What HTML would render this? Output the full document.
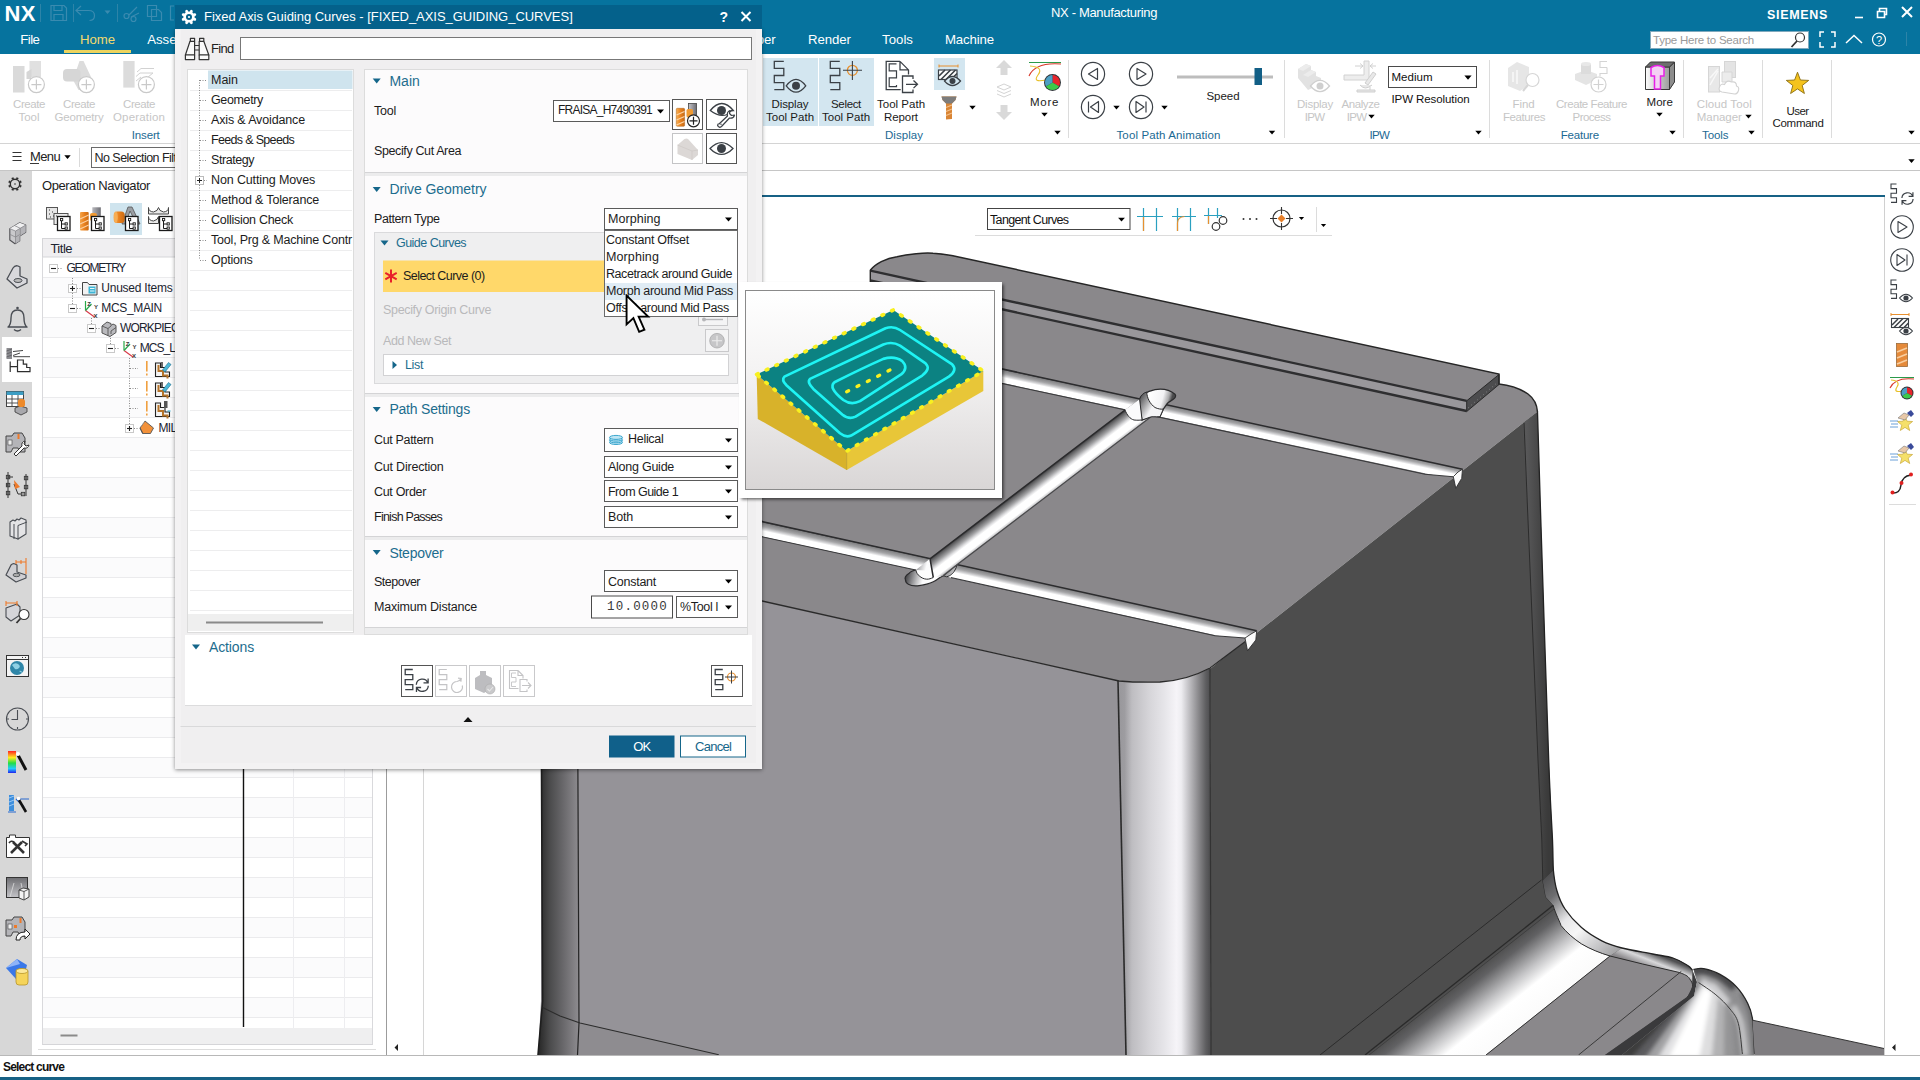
<!DOCTYPE html>
<html><head><meta charset="utf-8"><title>NX</title><style>html,body{margin:0;padding:0;background:#fff;}
body{width:1920px;height:1080px;position:relative;overflow:hidden;font-family:"Liberation Sans",sans-serif;}
.b{position:absolute;display:block;box-sizing:content-box;}
.t{position:absolute;white-space:nowrap;line-height:1.12;font-family:"Liberation Sans",sans-serif;}
svg{overflow:hidden;}
</style></head><body>
<div class="b" style="left:0px;top:0px;width:1920px;height:54px;background:#06739e;"></div>
<div class="t " style="left:4.5px;top:2.0px;font-size:22px;color:#fff;letter-spacing:0.47px;font-weight:bold;">NX</div>
<div class="b" style="left:40px;top:4px;width:1px;height:18px;background:#2d84a8;"></div>
<svg class="b" style="left:0px;top:0px;" width="180" height="28" viewBox="0 0 180 28"><g fill="none" stroke="#3a8bb0" stroke-width="1.2"><path d="M51 5.5h13l2.5 2.5v12.5h-15.5z M54 5.5v5h8v-5 M54 20.5v-6h9v6"/><path d="M81 6l-5 4.5 5 4.5 M76.5 10.5h12q6 0 6 5t-5 5"/><path d="M124 16a2.5 2.5 0 1 1 5 0a2.5 2.5 0 1 1-5 0z M131 19a2.5 2.5 0 1 1 5 0a2.5 2.5 0 1 1-5 0z M129 15l8-8 M131 17l8-4"/><path d="M147.500 5.5h9v11h-9z M151.500 9.500h7l3 3v8h-10z"/><path d="M174 6h-3.500v14h3.500"/></g><path d="M104.500 10.500h6l-3 3.500z" fill="#3a8bb0"/><path d="M73.500 4v18 M117.500 4v18" stroke="#2d84a8" stroke-width="1"/></svg>
<div class="t " style="left:1051.0px;top:6.0px;font-size:13px;color:#fff;letter-spacing:-0.33px;">NX - Manufacturing</div>
<div class="t " style="left:1767.0px;top:8.0px;font-size:12.5px;color:#fff;letter-spacing:0.68px;font-weight:bold;">SIEMENS</div>
<svg class="b" style="left:1855px;top:4px;" width="60" height="20" viewBox="0 0 60 20"><g stroke="#fff" stroke-width="1.6" fill="none"><path d="M0 13.500h8"/><path d="M22.500 7.500h7v6h-7z M24.500 7v-2.500h7v6h-2"/><path d="M47 3l10 10 M57 3l-10 10" stroke-width="2"/></g></svg>
<div class="t " style="left:20.3px;top:33.0px;font-size:13.2px;color:#fff;letter-spacing:-0.57px;">File</div>
<div class="t " style="left:80.0px;top:33.0px;font-size:13.2px;color:#f1da6e;letter-spacing:-0.05px;">Home</div>
<div class="b" style="left:64px;top:50px;width:67px;height:2.5px;background:#ecd35e;"></div>
<div class="t " style="left:147.2px;top:33.0px;font-size:13.2px;color:#fff;">Assemblies</div>
<div class="t " style="left:715.6px;top:33.0px;font-size:13.2px;color:#fff;">Developer</div>
<div class="t " style="left:808.0px;top:33.0px;font-size:13.2px;color:#fff;letter-spacing:-0.05px;">Render</div>
<div class="t " style="left:882.0px;top:33.0px;font-size:13.2px;color:#fff;letter-spacing:0.04px;">Tools</div>
<div class="t " style="left:945.0px;top:33.0px;font-size:13.2px;color:#fff;letter-spacing:-0.13px;">Machine</div>
<div class="b" style="left:1650px;top:31px;width:159px;height:18px;background:#fff;border:1px solid #7fa9bd;box-sizing:border-box;"></div>
<div class="t " style="left:1653.0px;top:34.0px;font-size:11.5px;color:#9a9a9a;letter-spacing:-0.24px;">Type Here to Search</div>
<svg class="b" style="left:1789px;top:31px;" width="18" height="18" viewBox="0 0 18 18"><g stroke="#333" stroke-width="1.2" fill="none"><circle cx="11" cy="6.500" r="4.500"/><path d="M8 10l-5.500 6" stroke-width="1.8"/></g></svg>
<svg class="b" style="left:1819px;top:31px;" width="95" height="18" viewBox="0 0 95 18"><g stroke="#fff" stroke-width="1.5" fill="none"><path d="M1 6v-5h4 M12 1h4v5 M16 11v5h-4 M5 16h-4v-5"/><path d="M27 12l8-7.500 8 7.500"/><circle cx="60" cy="8.500" r="6.500" stroke-width="1.2"/></g><text x="60" y="12.500" font-size="11" fill="#fff" text-anchor="middle" font-family="Liberation Sans">?</text><path d="M87.500 1v14" stroke="#2d84a8" stroke-width="1"/></svg>
<div class="b" style="left:0px;top:54px;width:1920px;height:89px;background:#fff;"></div>
<div class="b" style="left:0px;top:143px;width:1920px;height:1px;background:#d4d4d4;"></div>
<svg class="b" style="left:0px;top:0px;" width="180" height="143" viewBox="0 0 180 143"><rect x="13" y="66" width="11.500" height="26.500" fill="#dadada"/><rect x="29.500" y="61" width="11.500" height="16" fill="#e0e0e0"/><path d="M26.500 72l5-3v10h-5z" fill="#d6d6d6"/><circle cx="36.4" cy="84.6" r="8" fill="#fff" stroke="#c9c9c9" stroke-width="1.2"/><path d="M31.4 84.6h10 M36.4 79.6v10" stroke="#c9c9c9" stroke-width="1.2"/><path d="M73 80l6.500-19h4l8 17-5 12h-8z" fill="#dcdcdc"/><rect x="63" y="69" width="17.500" height="12.500" rx="4" fill="#d6d6d6"/><circle cx="86.4" cy="84.6" r="8" fill="#fff" stroke="#c9c9c9" stroke-width="1.2"/><path d="M81.4 84.6h10 M86.4 79.6v10" stroke="#c9c9c9" stroke-width="1.2"/><rect x="123.300" y="61" width="11.300" height="26.600" fill="#dcdcdc"/><path d="M137 72l4-3.500h13 M136 76.500l4-3.500h13l-5 4 M136 81l5-4" fill="none" stroke="#d2d2d2" stroke-width="1"/><circle cx="146.4" cy="84.6" r="8" fill="#fff" stroke="#c9c9c9" stroke-width="1.2"/><path d="M141.4 84.6h10 M146.4 79.6v10" stroke="#c9c9c9" stroke-width="1.2"/></svg>
<div class="t " style="left:13.0px;top:98.0px;font-size:11.5px;color:#c6c6c6;letter-spacing:-0.42px;">Create</div>
<div class="t " style="left:18.5px;top:111.0px;font-size:11.5px;color:#c6c6c6;letter-spacing:-0.02px;">Tool</div>
<div class="t " style="left:63.0px;top:98.0px;font-size:11.5px;color:#c6c6c6;letter-spacing:-0.42px;">Create</div>
<div class="t " style="left:54.5px;top:111.0px;font-size:11.5px;color:#c6c6c6;letter-spacing:-0.19px;">Geometry</div>
<div class="t " style="left:123.0px;top:98.0px;font-size:11.5px;color:#c6c6c6;letter-spacing:-0.42px;">Create</div>
<div class="t " style="left:113.0px;top:111.0px;font-size:11.5px;color:#c6c6c6;letter-spacing:0.17px;">Operation</div>
<div class="t " style="left:131.7px;top:129.0px;font-size:11.5px;color:#1b6993;letter-spacing:-0.13px;">Insert</div>
<div class="b" style="left:763px;top:58px;width:54.5px;height:67.5px;background:#d3e6f0;"></div>
<div class="b" style="left:819px;top:58px;width:55px;height:67.5px;background:#d3e6f0;"></div>
<svg class="b" style="left:0px;top:0px;left:0" width="1100" height="143" viewBox="0 0 1100 143"><path d="M783.8 61.4 h-9.5 v7.05 h9.5 v7.05 h-9.5 v7.05 h9.5 v7.05 h-9.5" fill="none" stroke="#3b4046" stroke-width="1.3"/><path d="M786.25 85.8 Q796 72.975 805.75 85.8 Q796 98.625 786.25 85.8z" fill="none" stroke="#3b4046" stroke-width="1.3"/><circle cx="796" cy="85.8" r="4" fill="#3b4046"/><path d="M839.8 61.4 h-9.5 v7.05 h9.5 v7.05 h-9.5 v7.05 h9.5 v7.05 h-9.5" fill="none" stroke="#3b4046" stroke-width="1.3"/><circle cx="852.400" cy="70.300" r="5" fill="none" stroke="#e8902f" stroke-width="1.3"/><path d="M843 70.300h19 M852.400 61v19" stroke="#3b4046" stroke-width="1.1"/><path d="M900 61.400h-13.800v28.200h14.500 M900 61.400l8.500 8.500v4.500 M900 61.400v8.500h8.500" fill="none" stroke="#3b4046" stroke-width="1.3"/><path d="M896.500 63.800h-7.300v7h7.300v7h-7.300v8.800h7.300v-1.500" fill="none" stroke="#3b4046" stroke-width="1.2"/><path d="M913 79v-3h-10.500v16.500h10.500v-3 M906 84.300h11 M913.500 80.500l4 3.800-4 3.800" fill="none" stroke="#3b4046" stroke-width="1.3"/></svg>
<div class="t " style="left:771.5px;top:98.0px;font-size:11.5px;color:#1a1a1a;letter-spacing:-0.10px;">Display</div>
<div class="t " style="left:766.0px;top:111.0px;font-size:11.5px;color:#1a1a1a;letter-spacing:0.01px;">Tool Path</div>
<div class="t " style="left:831.0px;top:98.0px;font-size:11.5px;color:#1a1a1a;letter-spacing:-0.33px;">Select</div>
<div class="t " style="left:822.0px;top:111.0px;font-size:11.5px;color:#1a1a1a;letter-spacing:0.01px;">Tool Path</div>
<div class="t " style="left:877.0px;top:98.0px;font-size:11.5px;color:#1a1a1a;letter-spacing:0.01px;">Tool Path</div>
<div class="t " style="left:884.0px;top:111.0px;font-size:11.5px;color:#1a1a1a;letter-spacing:-0.09px;">Report</div>
<div class="b" style="left:934px;top:58px;width:31px;height:32px;background:#d3e6f0;"></div>
<svg class="b" style="left:0px;top:0px;left:0" width="1300" height="143" viewBox="0 0 1300 143"><path d="M939 66h19 M939 64.500v3 M958 64.500v3" stroke="#e8902f" stroke-width="1" fill="none"/><rect x="938.500" y="70" width="18.500" height="9.500" fill="#fff" stroke="#3b4046" stroke-width="1.2"/><path d="M939 76l6-6 M941 79.500l9.500-9.500 M946 79.500l9.500-9.500 M951 79.500l6-6" stroke="#3b4046" stroke-width="1.6"/><path d="M944.5 81 Q952.5 71.975 960.5 81 Q952.5 90.025 944.5 81z" fill="#d3e6f0" stroke="#3b4046" stroke-width="1.3"/><circle cx="952.5" cy="81" r="3" fill="#3b4046"/><path d="M941.500 96.500h15l-1 3.500-3.500 3.500v15.500l-6 .5v-16l-3.500-3.500z" fill="#d98535"/><path d="M941.500 96.500h15l-1 3.500-3.500 3.500h-6l-3.500-3.500z" fill="#7d7d7d"/><path d="M946 107.500l6-2.500 M946 111.500l6-2.500 M946 115.500l6-2.500" stroke="#f4c08a" stroke-width="1.2"/><path d="M969.3 105.74 h6.4 l-3.2 3.68z" fill="#000"/><path d="M1004 60l8 8h-4.500v7h-7v-7h-4.500z" fill="#d9d9d9"/><path d="M1004 120l8-8h-4.500v-7h-7v7h-4.500z" fill="#d9d9d9"/><path d="M997 87l7-3 7 3-7 3z M997 90.500l7 3 7-3 M997 94l7 3 7-3" fill="none" stroke="#d4d4d4" stroke-width="1"/><path d="M1029 62.500h32" stroke="#2a9a4a" stroke-width="1"/><path d="M1029 76q6-14 32-12" fill="none" stroke="#d8392b" stroke-width="1.1"/><path d="M1030 66q14 1 8 9t8 5" fill="none" stroke="#e8c02a" stroke-width="1.1"/><circle cx="1052.500" cy="82.500" r="8.500" fill="#2f3338"/><path d="M1052.500 82.500v-7.500a7.500 7.500 0 0 1 6.500 11.200z" fill="#e8242c"/><path d="M1052.500 82.500l6.500 3.700a7.500 7.500 0 0 1-13 0z" fill="#3ec84a"/><path d="M1052.500 82.500l-6.500 3.700a7.500 7.500 0 0 1 6.500-11.200z" fill="#4d9fc4"/><path d="M1041.3 112.74 h6.4 l-3.2 3.68z" fill="#000"/><path d="M1054.3 130.74 h6.4 l-3.2 3.68z" fill="#000"/><path d="M1068.500 60v78" stroke="#dcdcdc"/><circle cx="1093" cy="74" r="11.600" fill="none" stroke="#3b4046" stroke-width="1.2"/><circle cx="1141" cy="74" r="11.600" fill="none" stroke="#3b4046" stroke-width="1.2"/><circle cx="1093" cy="107" r="11.600" fill="none" stroke="#3b4046" stroke-width="1.2"/><circle cx="1141" cy="107" r="11.600" fill="none" stroke="#3b4046" stroke-width="1.2"/><path d="M1097.500 68.500v11l-9-5.500z" fill="none" stroke="#3b4046" stroke-width="1.2" stroke-linejoin="round"/><path d="M1137 68.500v11l9-5.500z" fill="none" stroke="#3b4046" stroke-width="1.2" stroke-linejoin="round"/><path d="M1098.500 101.500v11l-8-5.500z M1088.500 101.500v11" fill="none" stroke="#3b4046" stroke-width="1.2" stroke-linejoin="round"/><path d="M1136 101.500v11l8-5.500z M1146 101.500v11" fill="none" stroke="#3b4046" stroke-width="1.2" stroke-linejoin="round"/><path d="M1113.3 105.74 h6.4 l-3.2 3.68z" fill="#000"/><path d="M1161.3 105.74 h6.4 l-3.2 3.68z" fill="#000"/><rect x="1177" y="75.500" width="96" height="3" fill="#bdbdbd"/><rect x="1254.500" y="68" width="7.500" height="17" fill="#125f86"/><path d="M1268.8 130.74 h6.4 l-3.2 3.68z" fill="#000"/><path d="M1284.500 60v78" stroke="#dcdcdc"/></svg>
<div class="t " style="left:1030.0px;top:96.0px;font-size:11.5px;color:#1a1a1a;letter-spacing:0.70px;">More</div>
<div class="t " style="left:1206.5px;top:90.0px;font-size:11.5px;color:#1a1a1a;letter-spacing:-0.05px;">Speed</div>
<div class="t " style="left:885.0px;top:129.0px;font-size:11.5px;color:#1b6993;letter-spacing:0.04px;">Display</div>
<div class="t " style="left:1116.5px;top:129.0px;font-size:11.5px;color:#1b6993;letter-spacing:0.12px;">Tool Path Animation</div>
<svg class="b" style="left:0px;top:0px;left:0" width="1920" height="143" viewBox="0 0 1920 143"><path d="M1298 78v-9l8-5 5 2v4l5 2v4l5 2v6l-13 6z" fill="#e2e2e2"/><path d="M1298 69l8-5 5 2-8 5z M1311 70l5 2-8 5-5-2z" fill="#ececec"/><path d="M1310.5 86 Q1320 74.6 1329.5 86 Q1320 97.4 1310.5 86z" fill="#fff" stroke="#cfcfcf" stroke-width="1.3"/><circle cx="1320" cy="86" r="3.5" fill="#cfcfcf"/><path d="M1344 75h20v-14h5v19h-25z" fill="#ededed" stroke="#d2d2d2" stroke-width="1"/><path d="M1355 66h8 M1360 63.500l3 2.500-3 2.500 M1376 66h-6 M1373 63.500l-3 2.500 3 2.500" stroke="#d0d0d0" fill="none"/><path d="M1373 72l-8 11 3 2 8-11z M1360 85q5 6 12 0 M1357 92h18v-2h-18z M1370 90v-3" fill="#e8e8e8" stroke="#cfcfcf" stroke-width="1"/><path d="M1368.3 114.74 h6.4 l-3.2 3.68z" fill="#000"/><rect x="1388.500" y="66.500" width="88" height="21" fill="#fff" stroke="#4a4a4a" stroke-width="1"/><path d="M1464.4 75.52 h7.2 l-3.6 4.14z" fill="#000"/><path d="M1475.3 130.74 h6.4 l-3.2 3.68z" fill="#000"/><path d="M1489.500 60v78" stroke="#dcdcdc"/><path d="M1508 68l9-6 12 5v18l-9 6-12-5z" fill="#e6e6e6"/><path d="M1517 70v14 M1513 72v10" stroke="#f4f4f4" stroke-width="2"/><circle cx="1532.500" cy="80" r="6.500" fill="#fff" stroke="#d6d6d6" stroke-width="1.200"/><path d="M1528 85l-5 6" stroke="#d6d6d6" stroke-width="2"/><path d="M1575 74l11-4 11 4v6l-11 5-11-5z" fill="#e4e4e4"/><path d="M1581 64h10v10h-10z" fill="#dcdcdc"/><ellipse cx="1586" cy="64" rx="5" ry="2" fill="#e8e8e8"/><path d="M1607 61.500h-7v6h7 M1607 67.500v6h-7v3" fill="none" stroke="#d4d4d4" stroke-width="1.1"/><circle cx="1598.5" cy="84.5" r="7.5" fill="#fff" stroke="#d2d2d2" stroke-width="1.2"/><path d="M1593.5 84.5h10 M1598.5 79.5v10" stroke="#d2d2d2" stroke-width="1.2"/><defs><linearGradient id="mg" x1="0" x2="1"><stop offset="0" stop-color="#fdfdfd"/><stop offset="1" stop-color="#9c9c9c"/></linearGradient></defs><path d="M1645.500 67l5-5h24v20l-5 7.500h-24z" fill="#55585c"/><path d="M1645.500 67h24v22.500h-24z" fill="url(#mg)" stroke="#3a3a3a" stroke-width="1"/><path d="M1669.500 67l5-5v20l-5 7.500z" fill="#8d8d8d" stroke="#3a3a3a" stroke-width="1"/><path d="M1645.500 67l5-5h24l-5 5z" fill="#6d6d6d" stroke="#3a3a3a" stroke-width="1"/><path d="M1651 67.500v8.500h3.500v13h6v-13h3.500v-8.500q-6.500-4-13 0z" fill="#f4d0f4" stroke="#e61fe6" stroke-width="1.500"/><path d="M1656.3 112.74 h6.4 l-3.2 3.68z" fill="#000"/><path d="M1669.3 130.74 h6.4 l-3.2 3.68z" fill="#000"/><path d="M1683.500 60v78" stroke="#dcdcdc"/><rect x="1708.500" y="66.500" width="11" height="25.500" fill="#e8e8e8" stroke="#d6d6d6"/><rect x="1724.500" y="61.500" width="11" height="16" fill="#e4e4e4" stroke="#d6d6d6"/><path d="M1722 72h10v10h-10z" fill="#ececec" stroke="#d6d6d6"/><path d="M1710 85l8-14 M1710 78l8-9" stroke="#f8f8f8" stroke-width="1.500"/><path d="M1722 92q-4-1-2.500-5t5-2.500q2-5 7-2.500q5-1 5 4q3 1 2 4.500t-4 3.500z" fill="#fff" stroke="#d2d2d2" stroke-width="1.100"/><path d="M1745.3 114.74 h6.4 l-3.2 3.68z" fill="#000"/><path d="M1748.3 130.74 h6.4 l-3.2 3.68z" fill="#000"/><path d="M1762.500 60v78" stroke="#dcdcdc"/><polygon points="1797.5,72.2 1800.4,80.0 1808.7,80.4 1802.2,85.5 1804.4,93.5 1797.5,88.9 1790.6,93.5 1792.8,85.5 1786.3,80.4 1794.6,80.0" fill="#f5c31d" stroke="#8a6d12" stroke-width="0.900" stroke-linejoin="round"/><path d="M1831.500 60v78" stroke="#dcdcdc"/><path d="M1908.3 130.74 h6.4 l-3.2 3.68z" fill="#000"/></svg>
<div class="t " style="left:1297.0px;top:98.0px;font-size:11.5px;color:#c6c6c6;letter-spacing:-0.24px;">Display</div>
<div class="t " style="left:1304.8px;top:111.0px;font-size:11.5px;color:#c6c6c6;letter-spacing:-0.74px;">IPW</div>
<div class="t " style="left:1341.5px;top:98.0px;font-size:11.5px;color:#c6c6c6;letter-spacing:-0.42px;">Analyze</div>
<div class="t " style="left:1346.8px;top:111.0px;font-size:11.5px;color:#c6c6c6;letter-spacing:-0.74px;">IPW</div>
<div class="t " style="left:1391.5px;top:71.0px;font-size:11.5px;color:#111;letter-spacing:0.02px;">Medium</div>
<div class="t " style="left:1391.5px;top:93.0px;font-size:11.5px;color:#111;letter-spacing:-0.09px;">IPW Resolution</div>
<div class="t " style="left:1369.5px;top:129.0px;font-size:11.5px;color:#1b6993;letter-spacing:-0.74px;">IPW</div>
<div class="t " style="left:1512.5px;top:98.0px;font-size:11.5px;color:#c6c6c6;letter-spacing:-0.09px;">Find</div>
<div class="t " style="left:1503.0px;top:111.0px;font-size:11.5px;color:#c6c6c6;letter-spacing:-0.42px;">Features</div>
<div class="t " style="left:1556.0px;top:98.0px;font-size:11.5px;color:#c6c6c6;letter-spacing:-0.45px;">Create Feature</div>
<div class="t " style="left:1572.5px;top:111.0px;font-size:11.5px;color:#c6c6c6;letter-spacing:-0.51px;">Process</div>
<div class="t " style="left:1560.8px;top:129.0px;font-size:11.5px;color:#1b6993;letter-spacing:-0.23px;">Feature</div>
<div class="t " style="left:1646.5px;top:96.0px;font-size:11.5px;color:#1a1a1a;letter-spacing:0.07px;">More</div>
<div class="t " style="left:1696.8px;top:98.0px;font-size:11.5px;color:#c6c6c6;letter-spacing:0.09px;">Cloud Tool</div>
<div class="t " style="left:1696.8px;top:111.0px;font-size:11.5px;color:#c6c6c6;letter-spacing:-0.06px;">Manager</div>
<div class="t " style="left:1702.0px;top:129.0px;font-size:11.5px;color:#1b6993;letter-spacing:-0.07px;">Tools</div>
<div class="t " style="left:1786.5px;top:105.0px;font-size:11.5px;color:#1a1a1a;letter-spacing:-0.57px;">User</div>
<div class="t " style="left:1772.5px;top:117.0px;font-size:11.5px;color:#1a1a1a;letter-spacing:-0.29px;">Command</div>
<div class="b" style="left:0px;top:144px;width:1920px;height:26px;background:#fff;"></div>
<svg class="b" style="left:0px;top:0px;left:0" width="1920" height="172" viewBox="0 0 1920 172"><path d="M12.500 152.500h9 M12.500 156.500h9 M12.500 160.500h9" stroke="#333" stroke-width="1.100"/><path d="M64.3 155.24 h6.4 l-3.2 3.68z" fill="#000"/><path d="M79.500 148v19" stroke="#dadada"/><path d="M30 163.500h9" stroke="#222" stroke-width="0.900"/><rect x="91.500" y="147.500" width="120" height="20" fill="#fff" stroke="#6a6a6a"/><path d="M1908.3 159.24 h6.4 l-3.2 3.68z" fill="#000"/></svg>
<div class="t " style="left:30.0px;top:150.0px;font-size:13px;color:#222;letter-spacing:-0.63px;">Menu</div>
<div class="t " style="left:94.5px;top:151.0px;font-size:12.5px;color:#222;letter-spacing:-0.53px;">No Selection Filter</div>
<div class="b" style="left:0px;top:170px;width:1920px;height:1px;background:#c6c6c6;"></div>
<div class="b" style="left:0px;top:171px;width:32px;height:885px;background:#d7d7d7;"></div>
<div class="b" style="left:2px;top:337px;width:30px;height:45px;background:#fff;"></div>
<div class="b" style="left:32px;top:171px;width:355px;height:885px;background:#fff;"></div>
<div class="b" style="left:386px;top:171px;width:1px;height:885px;background:#9c9c9c;"></div>
<div class="t " style="left:42.0px;top:179.0px;font-size:13px;color:#1c1c1c;letter-spacing:-0.44px;">Operation Navigator</div>
<div class="b" style="left:110px;top:203px;width:32px;height:32px;background:#cfe4ee;"></div>
<svg class="b" style="left:0px;top:0px;left:0" width="400" height="1060" viewBox="0 0 400 1060"><rect x="46.500" y="207.500" width="11" height="11.500" fill="#e6e6e6" stroke="#555" stroke-width="1"/><rect x="54" y="213.500" width="14" height="11" fill="#ececec" stroke="#555" stroke-width="1"/><path d="M49 210h1 M52 212h1 M49 214h1 M53 216h1 M50 217h1 M56 216h1 M57 219h1" stroke="#333" stroke-width="1"/><rect x="57.5" y="216.5" width="12.500" height="14" fill="#fff" stroke="#1a1a1a" stroke-width="1.300"/><path d="M61.5 220.5v8h4 M61.5 224h4" fill="none" stroke="#1a1a1a" stroke-width="1"/><rect x="60.5" y="218.5" width="2.200" height="2.200" fill="#fff" stroke="#1a1a1a" stroke-width="0.900"/><rect x="65.1" y="222.8" width="2.200" height="2.200" fill="#fff" stroke="#1a1a1a" stroke-width="0.900"/><rect x="65.1" y="227" width="2.200" height="2.200" fill="#fff" stroke="#1a1a1a" stroke-width="0.900"/><defs><linearGradient id="og" x1="0" x2="1"><stop offset="0" stop-color="#f5a54a"/><stop offset="0.5" stop-color="#e8801e"/><stop offset="1" stop-color="#c96a12"/></linearGradient><linearGradient id="gg" x1="0" x2="1"><stop offset="0" stop-color="#b8b8bd"/><stop offset="1" stop-color="#6e6e74"/></linearGradient></defs><rect x="92.300" y="207.300" width="8.500" height="12" fill="url(#gg)"/><rect x="90" y="213" width="7" height="8" rx="2" fill="#f09a32"/><rect x="80" y="212" width="8.700" height="18.500" rx="1" fill="url(#og)"/><path d="M80 219l8.700-4 M80 224l8.700-4 M80 229l8.700-4" stroke="#fbd0a0" stroke-width="1.300"/><rect x="91.5" y="216.5" width="12.500" height="14" fill="#fff" stroke="#1a1a1a" stroke-width="1.300"/><path d="M95.5 220.5v8h4 M95.5 224h4" fill="none" stroke="#1a1a1a" stroke-width="1"/><rect x="94.5" y="218.5" width="2.200" height="2.200" fill="#fff" stroke="#1a1a1a" stroke-width="0.900"/><rect x="99.1" y="222.8" width="2.200" height="2.200" fill="#fff" stroke="#1a1a1a" stroke-width="0.900"/><rect x="99.1" y="227" width="2.200" height="2.200" fill="#fff" stroke="#1a1a1a" stroke-width="0.900"/><path d="M122 224l6-17h4l8 17h-3.500l-6.500-13-4.500 13z" fill="#9a9ea3" stroke="#555" stroke-width="0.800"/><rect x="113.700" y="211.600" width="11" height="11.400" rx="3.500" fill="url(#og)"/><ellipse cx="115.800" cy="217.300" rx="2" ry="5.700" fill="#f7ae55"/><rect x="125.5" y="216.5" width="12.500" height="14" fill="#fff" stroke="#1a1a1a" stroke-width="1.300"/><path d="M129.5 220.5v8h4 M129.5 224h4" fill="none" stroke="#1a1a1a" stroke-width="1"/><rect x="128.5" y="218.5" width="2.200" height="2.200" fill="#fff" stroke="#1a1a1a" stroke-width="0.900"/><rect x="133.1" y="222.8" width="2.200" height="2.200" fill="#fff" stroke="#1a1a1a" stroke-width="0.900"/><rect x="133.1" y="227" width="2.200" height="2.200" fill="#fff" stroke="#1a1a1a" stroke-width="0.900"/><path d="M148.500 207.500q0 4 5 4.500q4.500-1 5-4.500q.5 3.500 5 4.500q5-.5 5-4.500v6.500h-20z" fill="#e9e9e9" stroke="#444" stroke-width="1"/><path d="M148.500 216.500q0 4 5 4.500q4.500-1 5-4.500v7h-10z" fill="#e9e9e9" stroke="#444" stroke-width="1"/><rect x="159.5" y="216.5" width="12.500" height="14" fill="#fff" stroke="#1a1a1a" stroke-width="1.300"/><path d="M163.5 220.5v8h4 M163.5 224h4" fill="none" stroke="#1a1a1a" stroke-width="1"/><rect x="162.5" y="218.5" width="2.200" height="2.200" fill="#fff" stroke="#1a1a1a" stroke-width="0.900"/><rect x="167.1" y="222.8" width="2.200" height="2.200" fill="#fff" stroke="#1a1a1a" stroke-width="0.900"/><rect x="167.1" y="227" width="2.200" height="2.200" fill="#fff" stroke="#1a1a1a" stroke-width="0.900"/><rect x="42.500" y="238.500" width="330" height="18.500" fill="#f0eff1" stroke="#d5d5d8" stroke-width="1"/><rect x="43" y="277" width="329" height="20" fill="#fbfbfc"/><rect x="43" y="317" width="329" height="20" fill="#fbfbfc"/><rect x="43" y="357" width="329" height="20" fill="#fbfbfc"/><rect x="43" y="397" width="329" height="20" fill="#fbfbfc"/><rect x="43" y="437" width="329" height="20" fill="#fbfbfc"/><rect x="43" y="477" width="329" height="20" fill="#fbfbfc"/><rect x="43" y="517" width="329" height="20" fill="#fbfbfc"/><rect x="43" y="557" width="329" height="20" fill="#fbfbfc"/><rect x="43" y="597" width="329" height="20" fill="#fbfbfc"/><rect x="43" y="637" width="329" height="20" fill="#fbfbfc"/><rect x="43" y="677" width="329" height="20" fill="#fbfbfc"/><rect x="43" y="717" width="329" height="20" fill="#fbfbfc"/><rect x="43" y="757" width="329" height="20" fill="#fbfbfc"/><rect x="43" y="797" width="329" height="20" fill="#fbfbfc"/><rect x="43" y="837" width="329" height="20" fill="#fbfbfc"/><rect x="43" y="877" width="329" height="20" fill="#fbfbfc"/><rect x="43" y="917" width="329" height="20" fill="#fbfbfc"/><rect x="43" y="957" width="329" height="20" fill="#fbfbfc"/><rect x="43" y="997" width="329" height="20" fill="#fbfbfc"/><path d="M43 277.5h329" stroke="#ebebed"/><path d="M43 297.5h329" stroke="#ebebed"/><path d="M43 317.5h329" stroke="#ebebed"/><path d="M43 337.5h329" stroke="#ebebed"/><path d="M43 357.5h329" stroke="#ebebed"/><path d="M43 377.5h329" stroke="#ebebed"/><path d="M43 397.5h329" stroke="#ebebed"/><path d="M43 417.5h329" stroke="#ebebed"/><path d="M43 437.5h329" stroke="#ebebed"/><path d="M43 457.5h329" stroke="#ebebed"/><path d="M43 477.5h329" stroke="#ebebed"/><path d="M43 497.5h329" stroke="#ebebed"/><path d="M43 517.5h329" stroke="#ebebed"/><path d="M43 537.5h329" stroke="#ebebed"/><path d="M43 557.5h329" stroke="#ebebed"/><path d="M43 577.5h329" stroke="#ebebed"/><path d="M43 597.5h329" stroke="#ebebed"/><path d="M43 617.5h329" stroke="#ebebed"/><path d="M43 637.5h329" stroke="#ebebed"/><path d="M43 657.5h329" stroke="#ebebed"/><path d="M43 677.5h329" stroke="#ebebed"/><path d="M43 697.5h329" stroke="#ebebed"/><path d="M43 717.5h329" stroke="#ebebed"/><path d="M43 737.5h329" stroke="#ebebed"/><path d="M43 757.5h329" stroke="#ebebed"/><path d="M43 777.5h329" stroke="#ebebed"/><path d="M43 797.5h329" stroke="#ebebed"/><path d="M43 817.5h329" stroke="#ebebed"/><path d="M43 837.5h329" stroke="#ebebed"/><path d="M43 857.5h329" stroke="#ebebed"/><path d="M43 877.5h329" stroke="#ebebed"/><path d="M43 897.5h329" stroke="#ebebed"/><path d="M43 917.5h329" stroke="#ebebed"/><path d="M43 937.5h329" stroke="#ebebed"/><path d="M43 957.5h329" stroke="#ebebed"/><path d="M43 977.5h329" stroke="#ebebed"/><path d="M43 997.5h329" stroke="#ebebed"/><path d="M43 1017.5h329" stroke="#ebebed"/><path d="M42.500 257v788 M372.500 257v788" stroke="#d9d9dc"/><path d="M293.500 257v771 M344.500 257v771" stroke="#ededf0"/><rect x="43" y="1028" width="329" height="16.500" fill="#efeff0"/><path d="M60.500 1035.500h17" stroke="#8a8a8a" stroke-width="2"/><path d="M42.500 1044.500h330" stroke="#d5d5d8"/><path d="M38 1049.500h338" stroke="#dddddd"/><path d="M243.500 768v259" stroke="#111" stroke-width="1.400"/><path d="M58 268.500h5 M72.500 278v26 M77 288.500h4 M77 308.500h4 M91.500 318v6 M96 328.500h4 M110.500 338v6 M115 348.500h4 M129.500 358v66 M130 368.500h8 M130 388.500h8 M130 408.500h8 M134 428.500h4" stroke="#8a8a8a" stroke-width="1" stroke-dasharray="1 1.500" fill="none"/><rect x="49.5" y="264.5" width="8" height="8" fill="#fff" stroke="#c9c9c9" stroke-width="1"/><path d="M51 268.5h5" stroke="#222" stroke-width="1.1"/><rect x="68.5" y="284.5" width="8" height="8" fill="#fff" stroke="#c9c9c9" stroke-width="1"/><path d="M70 288.5h5" stroke="#222" stroke-width="1.1"/><path d="M72.5 286v5" stroke="#222" stroke-width="1.1"/><rect x="68.5" y="304.5" width="8" height="8" fill="#fff" stroke="#c9c9c9" stroke-width="1"/><path d="M70 308.5h5" stroke="#222" stroke-width="1.1"/><rect x="87.5" y="324.5" width="8" height="8" fill="#fff" stroke="#c9c9c9" stroke-width="1"/><path d="M89 328.5h5" stroke="#222" stroke-width="1.1"/><rect x="106.5" y="344.5" width="8" height="8" fill="#fff" stroke="#c9c9c9" stroke-width="1"/><path d="M108 348.5h5" stroke="#222" stroke-width="1.1"/><rect x="125.5" y="424.5" width="8" height="8" fill="#fff" stroke="#c9c9c9" stroke-width="1"/><path d="M127 428.5h5" stroke="#222" stroke-width="1.1"/><path d="M129.5 426v5" stroke="#222" stroke-width="1.1"/><path d="M82.500 282.500h5l1.500 2h8v10.500h-14.500z" fill="#f2f2f2" stroke="#444" stroke-width="1"/><rect x="88.500" y="286.500" width="7" height="7" fill="#3db5d6"/><path d="M90 288.500h4.500 M90 291h4.500" stroke="#fff" stroke-width="0.900"/><path d="M85.5 301v9.500" stroke="#2aa84a" stroke-width="1.200"/><path d="M85.5 310.5l9 6.500" stroke="#d83a4a" stroke-width="1.200"/><path d="M85.5 310.5l6-6.500" stroke="#2aa84a" stroke-width="1.200"/><text x="87.2" y="305.5" font-size="6" font-weight="bold" font-family="Liberation Sans" fill="#333">Z</text><text x="94" y="309" font-size="6" font-weight="bold" font-family="Liberation Sans" fill="#333">Y</text><text x="93.5" y="318" font-size="6" font-weight="bold" font-family="Liberation Sans" fill="#333">X</text><path d="M124 341v9.500" stroke="#2aa84a" stroke-width="1.200"/><path d="M124 350.5l9 6.500" stroke="#d83a4a" stroke-width="1.200"/><path d="M124 350.5l6-6.500" stroke="#2aa84a" stroke-width="1.200"/><text x="125.7" y="345.5" font-size="6" font-weight="bold" font-family="Liberation Sans" fill="#333">Z</text><text x="132.5" y="349" font-size="6" font-weight="bold" font-family="Liberation Sans" fill="#333">Y</text><text x="132" y="358" font-size="6" font-weight="bold" font-family="Liberation Sans" fill="#333">X</text><path d="M102 326l5-4 4 1.500v2l2-1.500 3 1.500v7l-6 4-8-3.500z" fill="#b9b9bd" stroke="#555" stroke-width="1"/><path d="M102 326l6 2.500v7 M108 328.500l3-2.500 M111 331l5-3.500 M111 331v3" fill="none" stroke="#555" stroke-width="0.900"/><path d="M146.800 361v10.500 M146.800 373.5v2" stroke="#f0a040" stroke-width="1.600"/><path d="M155.5 363h5v4.500h4.500v4.500h4.500v4.500h-14z" fill="#f4f4f4" stroke="#222" stroke-width="1.100"/><path d="M158.5 365v6h4.500v4.500h4.500v3" fill="none" stroke="#b5742a" stroke-width="2"/><path d="M162.5 370l6-7.500 2.500 2-6 7.500z" fill="#4db8d8" stroke="#1a6a8a" stroke-width="0.600"/><path d="M162 362v5" stroke="#333" stroke-width="1.500"/><path d="M146.800 381v10.500 M146.800 393.5v2" stroke="#f0a040" stroke-width="1.600"/><path d="M155.5 383h5v4.500h4.500v4.500h4.500v4.500h-14z" fill="#f4f4f4" stroke="#222" stroke-width="1.100"/><path d="M158.5 385v6h4.500v4.500h4.500v3" fill="none" stroke="#b5742a" stroke-width="2"/><path d="M162.5 390l6-7.500 2.500 2-6 7.500z" fill="#4db8d8" stroke="#1a6a8a" stroke-width="0.600"/><path d="M162 382v5" stroke="#333" stroke-width="1.500"/><path d="M146.800 401v10.500 M146.800 413.5v2" stroke="#f0a040" stroke-width="1.600"/><path d="M155.5 403h5v4.500h4.500v4.500h4.500v4.500h-14z" fill="#f4f4f4" stroke="#222" stroke-width="1.100"/><path d="M158.5 405v6h4.500v4.500h4.500v3" fill="none" stroke="#b5742a" stroke-width="2"/><rect x="164" y="401" width="3.500" height="7" fill="#555"/><path d="M167.5 411h3" stroke="#3bb0d0" stroke-width="1.200"/><path d="M140 428l5-7 8.500 7-3 5.500h-8z" fill="#f2913a" stroke="#555" stroke-width="0.900"/><path d="M140 428l3 5.500" stroke="#555" stroke-width="0.900"/><path d="M140 428l5-7-2 2z" fill="#e8e8e8"/></svg>
<div class="t " style="left:50.4px;top:242.0px;font-size:13px;color:#1b2430;letter-spacing:-0.48px;">Title</div>
<div class="t " style="left:66.4px;top:262.0px;font-size:12px;color:#1b2430;letter-spacing:-1.21px;">GEOMETRY</div>
<div class="t " style="left:101.3px;top:282.0px;font-size:12px;color:#1b2430;letter-spacing:-0.24px;">Unused Items</div>
<div class="t " style="left:101.3px;top:302.0px;font-size:12px;color:#1b2430;letter-spacing:-0.35px;">MCS_MAIN</div>
<div class="t " style="left:120.0px;top:322.0px;font-size:12px;color:#1b2430;letter-spacing:-0.82px;">WORKPIECE</div>
<div class="t " style="left:139.7px;top:342.0px;font-size:12px;color:#1b2430;letter-spacing:-0.97px;">MCS_LOCAL</div>
<div class="t " style="left:158.4px;top:422.0px;font-size:12px;color:#1b2430;letter-spacing:-0.67px;">MILL</div>
<svg class="b" style="left:0px;top:0px;left:0" width="34" height="1060" viewBox="0 0 34 1060"><circle cx="15" cy="184" r="4.700" fill="none" stroke="#2e2e2e" stroke-width="1.400"/><circle cx="15" cy="184" r=".800" fill="#2e2e2e"/><path d="M19.8 186.0L21.3 186.6" stroke="#2e2e2e" stroke-width="2.200"/><path d="M17.0 188.8L17.6 190.3" stroke="#2e2e2e" stroke-width="2.200"/><path d="M13.0 188.8L12.4 190.3" stroke="#2e2e2e" stroke-width="2.200"/><path d="M10.2 186.0L8.7 186.6" stroke="#2e2e2e" stroke-width="2.200"/><path d="M10.2 182.0L8.7 181.4" stroke="#2e2e2e" stroke-width="2.200"/><path d="M13.0 179.2L12.4 177.7" stroke="#2e2e2e" stroke-width="2.200"/><path d="M17.0 179.2L17.6 177.7" stroke="#2e2e2e" stroke-width="2.200"/><path d="M19.8 182.0L21.3 181.4" stroke="#2e2e2e" stroke-width="2.200"/><path d="M9.800 228.600l9.900-5.800 6 2.300v7.100l-6 3.900v4.800l-4.700 2.800-5.200-3.700z" fill="#c9c9cc" stroke="#505054" stroke-width="1.100" stroke-linejoin="round"/><path d="M9.800 228.600l9.900-5.800 6 2.300-10.200 6z" fill="#efeff0"/><path d="M15.500 231.100l10.200-6v7.100l-6 3.900v4.800l-4.200 2.500z" fill="#b4b4b8"/><path d="M9.800 228.600l5.700 2.500 10.200-6 M15.500 231.100v12.300 M9.800 234.300l5.700 2.800 4.200-2.500 M14.800 225.700l5.500 2.600v7.500 M20.300 228.300l0 0" fill="none" stroke="#8a8a8e" stroke-width=".8"/><path d="M7 279l6-11q2-3 5-2l2 1v9l7 3v4l-10 5z" fill="#d8d8dc" stroke="#4a4e54" stroke-width="1.300" stroke-linejoin="round"/><ellipse cx="18" cy="280.500" rx="4" ry="2" fill="#bbb" stroke="#4a4e54" stroke-width="1"/><path d="M8 327q3-2 3-9q0-8 6.500-8t6.500 8q0 7 3 9z" fill="none" stroke="#4a4e54" stroke-width="1.400" stroke-linejoin="round"/><path d="M14 329.500q3.500 3 7 0" fill="none" stroke="#4a4e54" stroke-width="1.400"/><circle cx="17.500" cy="308" r="1.300" fill="#4a4e54"/><rect x="6.500" y="348" width="5.500" height="11" fill="#8c8c90"/><path d="M6.500 351l5.500-2 M6.500 354l5.500-2 M6.500 357l5.500-2" stroke="#5a5a5e" stroke-width=".8"/><path d="M13 351.500l10-1 M13 355.500l7-2.500 M13.300 356.700h16.700" stroke="#444" stroke-width="1"/><path d="M10.200 361.500v10.500 M10.200 366.700h7.300 M17.500 360h5.800v4.200h3.400v3.300h3.300v4.200h-12.500z" fill="none" stroke="#2e2e2e" stroke-width="1.200"/><rect x="6.500" y="391.500" width="17" height="15" fill="#fff" stroke="#444" stroke-width="1"/><rect x="6.500" y="391.500" width="17" height="3.500" fill="#3d9ec4"/><path d="M6.500 399h17 M6.500 403h17 M12 395v11.500 M18 395v11.500" stroke="#444" stroke-width=".9"/><path d="M15 408l5-2 7 2v4l-6 3-6-3z" fill="#a8a8ac" stroke="#444" stroke-width=".9"/><rect x="18" y="399" width="7" height="8" rx="2.500" fill="#ee8a2a"/><path d="M6 436h6l2-3h8l3 5v14h-5l-2-4h-5l-2 4h-5z" fill="#b4b4b8" stroke="#444" stroke-width="1"/><rect x="8" y="440" width="4" height="5" fill="#eee" stroke="#444" stroke-width=".6"/><rect x="17.500" y="434" width="2" height="5" fill="#ee7a2a"/><path d="M14 454l8-8q-1-4 3-5l-1 3 2 2 3-1q-1 4-5 3l-8 8z" fill="#fff" stroke="#333" stroke-width="1"/><rect x="6.3" y="475.3" width="3.500" height="3.500" fill="#999" stroke="#333" stroke-width=".8"/><rect x="6.3" y="483.3" width="3.500" height="3.500" fill="#999" stroke="#333" stroke-width=".8"/><rect x="6.3" y="491.3" width="3.500" height="3.500" fill="#999" stroke="#333" stroke-width=".8"/><rect x="24.3" y="476.3" width="3.500" height="3.500" fill="#999" stroke="#333" stroke-width=".8"/><rect x="24.3" y="485.3" width="3.500" height="3.500" fill="#999" stroke="#333" stroke-width=".8"/><rect x="21.3" y="492.3" width="3.500" height="3.500" fill="#999" stroke="#333" stroke-width=".8"/><path d="M8 472v26 M26 474v22 M8 477h5 M8 485h-2 M21 494h-3l-4-10" fill="none" stroke="#333" stroke-width="1"/><path d="M14 480l6 7-5 2z" fill="#ee7a2a"/><path d="M10 522l3-2 2 1 2-2 2 1 2-2 5 2v14l-8 5-8-3z" fill="#e4e4e6" stroke="#4a4e54" stroke-width="1.100" stroke-linejoin="round"/><path d="M14 524v15 M18 525.500v14 M18 525.500l9-3.500" stroke="#4a4e54" stroke-width="1" fill="none"/><path d="M6 575l5-10q2-2 4-1l2 1v7l9 3v3l-10 4z" fill="#cfcfd3" stroke="#4a4e54" stroke-width="1.200" stroke-linejoin="round"/><ellipse cx="16.500" cy="575" rx="3.500" ry="1.700" fill="#aaa" stroke="#4a4e54" stroke-width=".9"/><path d="M16 562h10 M16 560v4 M21 560v4 M26 558v16" stroke="#ee7a2a" stroke-width="1.100"/><path d="M6 608l11-4 3 3v8l-9 6-5-4z" fill="#d5d5d9" stroke="#4a4e54" stroke-width="1.100" stroke-linejoin="round"/><path d="M6 603h11 M6 601v5 M17 601v5" stroke="#ee7a2a" stroke-width="1.100"/><circle cx="24" cy="614.500" r="5" fill="#fff" stroke="#333" stroke-width="1.100"/><path d="M20.500 618.500l-4 4.500" stroke="#333" stroke-width="1.800"/><rect x="6.500" y="655.500" width="22" height="21" fill="#f4f4f4" stroke="#333" stroke-width="1"/><path d="M6.500 659.500h22" stroke="#333"/><circle cx="17" cy="668" r="7" fill="#2f86a8"/><path d="M12 665q3-3 6-1t1 4t-4 1z M19 671q3-1 3 2" fill="#8fd0e4"/><path d="M22 657.500h1 M25 657.500h1" stroke="#333"/><circle cx="17.500" cy="719" r="11" fill="none" stroke="#4a4e54" stroke-width="1.100"/><path d="M17.500 710v9.500h-6 M17.500 729v-2 M7 719h2 M26 719h2" fill="none" stroke="#4a4e54" stroke-width="1.100"/><defs><linearGradient id="rb" x1="0" x2="0" y1="0" y2="1"><stop offset="0" stop-color="#f22"/><stop offset=".3" stop-color="#fe2"/><stop offset=".55" stop-color="#2d4"/><stop offset=".8" stop-color="#2cf"/><stop offset="1" stop-color="#22e"/></linearGradient></defs><rect x="8" y="751" width="8" height="22" fill="url(#rb)"/><path d="M18 755l8 15" stroke="#111" stroke-width="3"/><circle cx="18" cy="754" r="2" fill="#fff"/><rect x="9" y="795" width="5" height="16" fill="#3d8edc"/><path d="M9 798l5-2 M9 802l5-2 M9 806l5-2" stroke="#9cc8f4" stroke-width="1"/><path d="M16 799h13 M16 799l8 8 M8 812h8" stroke="#2a6ad0" stroke-width="1.200" fill="none"/><path d="M19 800l7 12" stroke="#111" stroke-width="2.600"/><circle cx="18.500" cy="798.500" r="1.800" fill="#fff"/><path d="M6.500 837.500h3v-2.500h6v2.500h14v20h-23z" fill="#fff" stroke="#333" stroke-width="1"/><path d="M11 853l11-11 M24 853l-11-11" stroke="#333" stroke-width="2.600"/><path d="M9 843q2-3 5-1 M22 841l5 3-2 2" stroke="#333" stroke-width="1.600" fill="none"/><defs><linearGradient id="gp" x1="0" x2="0" y1="0" y2="1"><stop offset="0" stop-color="#6e6e72"/><stop offset="1" stop-color="#c4c4c8"/></linearGradient></defs><rect x="6.500" y="877.500" width="21" height="20" fill="url(#gp)" stroke="#333" stroke-width="1"/><path d="M10 897l4-14 M24 897l-3-14" stroke="#ddd" stroke-width=".8"/><path d="M19 890l4-2 6 1v8l-5 3-5-2z" fill="#f4f4f4" stroke="#333" stroke-width=".9"/><path d="M19 890l5 1.500v8 M24 891.500l5-2.500" stroke="#333" stroke-width=".8" fill="none"/><path d="M6 920h6l2-3h8l3 5v14h-5l-2-4h-5l-2 4h-5z" fill="#b4b4b8" stroke="#444" stroke-width="1"/><rect x="8" y="924" width="4" height="5" fill="#eee" stroke="#444" stroke-width=".6"/><rect x="14" y="925" width="3" height="3" fill="#ee7a2a"/><rect x="19.500" y="918" width="2" height="5" fill="#ee7a2a"/><path d="M16 940q0-8 9-8v-3l5 5-5 5v-3q-5 0-5 4z" fill="#fff" stroke="#222" stroke-width="1"/><path d="M6 968l11-9 10 6-3 12-8 2z" fill="#3a78e8"/><path d="M6 968l11-9 3 5z" fill="#8fb4f8"/><rect x="16" y="969" width="12" height="16" rx="3" fill="#f5d45a" stroke="#b8962a" stroke-width=".8"/><ellipse cx="22" cy="971" rx="6" ry="2.500" fill="#fbe89a" stroke="#b8962a" stroke-width=".8"/></svg>
<div class="b" style="left:387px;top:171px;width:1498px;height:884px;background:#fff;"></div>
<div class="b" style="left:423px;top:171px;width:1px;height:884px;background:#d6d6d6;"></div>
<div class="b" style="left:1884px;top:197px;width:1px;height:858px;background:#d0d0d0;"></div>
<div class="b" style="left:1885px;top:171px;width:35px;height:884px;background:#fff;"></div>
<div class="b" style="left:387px;top:195px;width:1498px;height:2px;background:#176185;"></div>
<svg class="b" style="left:387px;top:197px" width="1497" height="858" viewBox="387 197 1497 858"><defs><linearGradient id="vf" gradientUnits="userSpaceOnUse" x1="1118" y1="0" x2="1211" y2="0"><stop offset="0" stop-color="#98979b"/><stop offset="0.07" stop-color="#9d9ca0"/><stop offset="0.15" stop-color="#bebdc1"/><stop offset="0.355" stop-color="#d8d7db"/><stop offset="0.5" stop-color="#e6e5e9"/><stop offset="0.63" stop-color="#f6f4f8"/><stop offset="0.68" stop-color="#eeedf1"/><stop offset="0.75" stop-color="#c8c7cb"/><stop offset="0.865" stop-color="#8a898c"/><stop offset="0.945" stop-color="#5e5e60"/><stop offset="1" stop-color="#4a4a4c"/></linearGradient><linearGradient id="lf" gradientUnits="userSpaceOnUse" x1="540" y1="0" x2="578" y2="0"><stop offset="0" stop-color="#2c2c2c"/><stop offset="0.25" stop-color="#4a4a4b"/><stop offset="0.6" stop-color="#68676a"/><stop offset="1" stop-color="#8c8a8e"/></linearGradient><linearGradient id="df" gradientUnits="userSpaceOnUse" x1="1365" y1="1055" x2="1424" y2="1129.700"><stop offset="0" stop-color="#4c4c4c"/><stop offset="0.12" stop-color="#616163"/><stop offset="0.36" stop-color="#c4c4c6"/><stop offset="0.52" stop-color="#ffffff"/><stop offset="0.78" stop-color="#fbfbfb"/><stop offset="0.92" stop-color="#bdbdc0"/><stop offset="1" stop-color="#8b898c"/></linearGradient><linearGradient id="df2" gradientUnits="userSpaceOnUse" x1="1622" y1="1055" x2="1694" y2="1146"><stop offset="0" stop-color="#3c3c3c"/><stop offset="0.10" stop-color="#b8b8ba"/><stop offset="0.28" stop-color="#ffffff"/><stop offset="0.52" stop-color="#f4f4f4"/><stop offset="0.72" stop-color="#a9a9ab"/><stop offset="0.9" stop-color="#6c6c6e"/><stop offset="1" stop-color="#4a4a4c"/></linearGradient><linearGradient id="rf" gradientUnits="userSpaceOnUse" x1="1500" y1="0" x2="1548" y2="0"><stop offset="0" stop-color="#4d4d4d"/><stop offset="0.55" stop-color="#585859"/><stop offset="1" stop-color="#3a3a3a"/></linearGradient><linearGradient id="rim" gradientUnits="userSpaceOnUse" x1="1543" y1="872" x2="1618" y2="956"><stop offset="0" stop-color="#454547"/><stop offset="0.22" stop-color="#6e6e70"/><stop offset="0.45" stop-color="#e6e6e8"/><stop offset="0.6" stop-color="#f6f6f6"/><stop offset="0.8" stop-color="#c9c9cb"/><stop offset="1" stop-color="#9c9c9e"/></linearGradient><linearGradient id="rim2" gradientUnits="userSpaceOnUse" x1="1640" y1="965" x2="1646" y2="950"><stop offset="0" stop-color="#8a888b"/><stop offset="0.5" stop-color="#d8d8da"/><stop offset="1" stop-color="#505052"/></linearGradient><linearGradient id="vg" gradientUnits="userSpaceOnUse" x1="1038" y1="476" x2="1059" y2="504"><stop offset="0" stop-color="#4a4a4c"/><stop offset="0.14" stop-color="#a5a5a8"/><stop offset="0.4" stop-color="#f2f2f4"/><stop offset="0.62" stop-color="#ffffff"/><stop offset="0.85" stop-color="#e9e9eb"/><stop offset="1" stop-color="#9b9b9e"/></linearGradient></defs><path d="M870.300 270.200 C875 264 886 258 897 256.700 C908 254 925 252.500 933 253.300 C942 253.800 948 255 954 256 L1499 374 L1499 384 C1508 385 1520 388.500 1528 394 C1534 398.500 1537 404 1537.500 412 L1523 423 L1254 635 L1226 656 L1207 669.600 C1195 676 1178 681 1160 682 C1145 682.500 1130 682 1119 681 L762 601 L700 587 L541 700 L541 560 L740 420 L870.300 285z" fill="#8a888b" stroke="none" /><polygon points="541,560 762,601 1119,681 1127,1055 538,1055 541,1001" fill="#959398" /><polygon points="542.6,1007.5 580,1023 718.8,1054.7 718.8,1055 538,1055" fill="#8e8c90" /><polygon points="541,560 577,566 579,1023 577.5,1055 538,1055 542.6,1001" fill="url(#lf)" /><path d="M577 566 L579 1023 L577.5 1055" fill="none" stroke="#242424" stroke-width="1.2" /><path d="M541 560 L541.5 769 L542.6 1001 L538 1055" fill="none" stroke="#1e1e1e" stroke-width="1.6" /><path d="M542.6 1007.5 L560 1016 L580 1023 L718.8 1054.7" fill="none" stroke="#2c2c2c" stroke-width="1.1" /><path d="M1537.5 412 C1538.0 430.0 1538.9 462.0 1540.8 520.0 C1542.7 578.0 1546.8 706.7 1548.7 760.0 C1550.7 813.3 1551.7 821.6 1552.5 840.0 C1553.3 858.4 1552.7 862.0 1553.4 870.5 C1554.2 879.0 1555.1 884.6 1557.0 891.0 C1558.9 897.4 1560.9 902.9 1565.0 909.0 C1569.1 915.1 1575.4 922.3 1581.5 927.6 C1587.6 932.9 1595.0 937.4 1601.8 940.8 C1608.5 944.2 1613.5 945.8 1622.0 948.0 C1630.5 950.2 1644.2 952.3 1652.7 954.0 C1661.2 955.7 1667.2 956.1 1673.0 958.0 C1678.8 959.9 1684.2 963.2 1687.4 965.3 C1690.7 967.3 1691.7 969.5 1692.5 970.3 L1700 1055 L1211 1055 L1210 669 L1226 656 L1254 635 L1523 423z" fill="#4d4d4d" stroke="none" /><polygon points="1523,423 1537.5,412 1540.8,520 1548.7,760 1552.5,840 1553.4,870.5 1542.8,880.7 1541.8,840 1538,760 1528,520" fill="url(#rf)" /><path d="M1524 423 L1528 520 L1538 760 L1541.8 840 L1542.8 880.7 L1545.8 897 L1553 905" fill="none" stroke="#2c2c2c" stroke-width="1" /><path d="M1118 681 C1130 682 1145 682.500 1160 682 C1178 681 1195 676 1210 668 L1211 1055 L1126 1055z" fill="url(#vf)" stroke="none" /><path d="M1118 681 L1126 1055" fill="none" stroke="#2a2a2a" stroke-width="1.6" /><path d="M1210 668 L1211 1055" fill="none" stroke="#333" stroke-width="1.2" /><path d="M700 587 L762 601 L1119 681 C1130 682 1145 682.500 1160 682 C1178 681 1195 676 1210 668 L1254 635" fill="none" stroke="#2a2a2a" stroke-width="1.300"/><path d="M1320 1055 L1541.5 880" fill="none" stroke="#2c2c2c" stroke-width="1" /><path d="M1365 1055 L1553 905.500 C1556 915 1560 922 1561 925.500 C1566 932 1574 939 1581.500 943.900 C1590 949 1600 953 1610 956 L1486 1055z" fill="url(#df)" stroke="none" /><path d="M1365 1055 L1553 905.5" fill="none" stroke="#2a2a2a" stroke-width="1.3" /><path d="M1369 1055 L1554 909" fill="none" stroke="#3a3a3a" stroke-width="0.8" /><path d="M1553.4 870.5 C1554.0 873.9 1555.1 884.6 1557.0 891.0 C1558.9 897.4 1560.9 902.9 1565.0 909.0 C1569.1 915.1 1575.4 922.3 1581.5 927.6 C1587.6 932.9 1595.0 937.4 1601.8 940.8 C1608.5 944.2 1618.6 946.8 1622.0 948.0 L1610 956 C1600 953 1590 949 1581.500 943.900 C1574 939 1566 932 1561 925.500 C1560 922 1556 915 1553 905 L1545.800 897 L1542.800 880.700z" fill="url(#rim)" stroke="none" /><path d="M1486 1055 L1610 956 L1642.600 964 L1679 972.400 C1685 974.500 1688 976 1689.400 978.500 C1692 982 1693 984 1692.500 986.600 C1692 991 1690 994 1687.400 996.800 L1605 1055z" fill="#8a888b" stroke="none" /><path d="M1622 948 C1627.1 949.0 1644.2 952.3 1652.7 954.0 C1661.2 955.7 1667.2 956.1 1673.0 958.0 C1678.8 959.9 1684.2 963.2 1687.4 965.3 C1690.7 967.3 1691.7 969.5 1692.5 970.3 L1692.500 986.600 C1693 984 1692 982 1689.400 978.500 C1688 976 1685 974.500 1679 972.400 L1642.600 964 L1610 956z" fill="url(#rim2)" stroke="none" /><path d="M1553 905 C1556 915 1560 922 1561 925.500 C1566 932 1574 939 1581.500 943.900 C1590 949 1600 953 1610 956 L1642.600 964 L1679 972.400 C1685 974.500 1688 976 1689.400 978.500 C1692 982 1693 984 1692.500 986.600 C1692 991 1690 994 1687.400 996.800" fill="none" stroke="#2e2e2e" stroke-width="1"/><path d="M1486 1055 L1610 956" fill="none" stroke="#333" stroke-width="1" /><path d="M1578.5 1055 L1681.3 971.4" fill="none" stroke="#3a3a3a" stroke-width="1" /><polygon points="1605,1055 1687.4,996.8 1692.5,986.6 1692.5,970.3 1697,982 1694,996 1622,1055" fill="#3a3a3c" /><clipPath id="b2c"><path d="M1693.5 969.3 C1695.2 969.2 1699.3 967.9 1703.7 968.7 C1708.1 969.6 1714.6 971.4 1720.0 974.4 C1725.4 977.4 1731.7 981.8 1736.3 986.6 C1740.9 991.4 1744.8 997.6 1747.5 1003.0 C1750.2 1008.4 1751.3 1010.5 1752.5 1019.0 C1753.7 1027.5 1754.2 1048.2 1754.6 1054.0 L1754.600 1055 L1622 1055 L1694 996 L1697 982z"/></clipPath><filter id="bl2" x="-10%" y="-10%" width="120%" height="120%"><feGaussianBlur stdDeviation="2.200"/></filter><path d="M1693.5 969.3 C1695.2 969.2 1699.3 967.9 1703.7 968.7 C1708.1 969.6 1714.6 971.4 1720.0 974.4 C1725.4 977.4 1731.7 981.8 1736.3 986.6 C1740.9 991.4 1744.8 997.6 1747.5 1003.0 C1750.2 1008.4 1751.3 1010.5 1752.5 1019.0 C1753.7 1027.5 1754.2 1048.2 1754.6 1054.0 L1754.600 1055 L1622 1055 L1694 996 L1697 982z" fill="#8e8e90" stroke="none" /><g clip-path="url(#b2c)"><g filter="url(#bl2)"><polygon points="1610,1058 1632,1058 1697,985 1690,990" fill="#3c3c3e" /><polygon points="1632,1058 1646,1058 1700,983.5 1697,985" fill="#5c5c5e" /><polygon points="1646,1058 1658,1058 1703,982.5 1700,983.5" fill="#a2a2a4" /><polygon points="1658,1058 1668,1058 1706,982 1703,982.5" fill="#e2e2e4" /><polygon points="1668,1058 1700,1058 1714,983 1706,982" fill="#ffffff" /><polygon points="1700,1058 1712,1058 1719,987 1714,983" fill="#dededf" /><polygon points="1712,1058 1724,1058 1725,994 1719,987" fill="#b2b2b4" /><polygon points="1724,1058 1735,1058 1731,1004 1725,994" fill="#949496" /><polygon points="1735,1058 1744,1058 1738,1022 1731,1004" fill="#8a8a8c" /><path d="M1692 972 C1694.0 971.6 1699.0 969.1 1703.7 969.7 C1708.4 970.3 1714.8 972.4 1720.0 975.4 C1725.2 978.4 1732.5 985.6 1735.0 987.6" fill="none" stroke="#4a4a4c" stroke-width="9"/><path d="M1701 981 C1703.5 982.5 1711.5 986.3 1716.0 990.0 C1720.5 993.7 1726.0 1000.8 1728.0 1003.0" fill="none" stroke="#cfcfd1" stroke-width="7"/><path d="M1733 1006 C1734.3 1008.8 1738.9 1014.7 1741.0 1023.0 C1743.1 1031.3 1744.8 1050.5 1745.5 1056.0" fill="none" stroke="#c4c4c6" stroke-width="6"/><path d="M1742 993 C1743.3 995.8 1748.1 1003.8 1750.0 1010.0 C1751.9 1016.2 1752.7 1022.3 1753.5 1030.0 C1754.3 1037.7 1754.8 1051.7 1755.0 1056.0" fill="none" stroke="#6e6e70" stroke-width="5"/></g></g><path d="M1693.5 969.3 C1695.2 969.2 1699.3 967.9 1703.7 968.7 C1708.1 969.6 1714.6 971.4 1720.0 974.4 C1725.4 977.4 1731.7 981.8 1736.3 986.6 C1740.9 991.4 1744.8 997.6 1747.5 1003.0 C1750.2 1008.4 1751.3 1010.5 1752.5 1019.0 C1753.7 1027.5 1754.2 1048.2 1754.6 1054.0" fill="none" stroke="#262626" stroke-width="1.300"/><path d="M1698.6 982.6 C1701.5 984.6 1710.7 990.4 1715.9 994.8 C1721.1 999.2 1726.3 1004.2 1730.0 1009.0 C1733.7 1013.8 1736.2 1015.8 1738.3 1023.3 C1740.4 1030.8 1741.7 1048.9 1742.4 1054.0" fill="none" stroke="#3c3c3c" stroke-width="1"/><polygon points="1752.5,1020.2 1884,1048.5 1884,1055 1754.6,1055" fill="#7f7d80" /><path d="M1752.5 1020.2 L1884 1048.5" fill="none" stroke="#333" stroke-width="1" /><path d="M1537.5 412 C1538.0 430.0 1538.9 462.0 1540.8 520.0 C1542.7 578.0 1546.8 706.7 1548.7 760.0 C1550.7 813.3 1551.7 821.6 1552.5 840.0 C1553.3 858.4 1552.7 862.0 1553.4 870.5 C1554.2 879.0 1555.1 884.6 1557.0 891.0 C1558.9 897.4 1560.9 902.9 1565.0 909.0 C1569.1 915.1 1575.4 922.3 1581.5 927.6 C1587.6 932.9 1595.0 937.4 1601.8 940.8 C1608.5 944.2 1613.5 945.8 1622.0 948.0 C1630.5 950.2 1644.2 952.3 1652.7 954.0 C1661.2 955.7 1667.2 956.1 1673.0 958.0 C1678.8 959.9 1684.2 963.2 1687.4 965.3 C1690.7 967.3 1691.7 969.5 1692.5 970.3" fill="none" stroke="#222" stroke-width="1.300"/><polygon points="870.3,271 1466.7,400.8 1466.7,410.8 870.3,280.5" fill="#99979b" /><path d="M870.3 270.7 L1466.7 400.8" fill="none" stroke="#2e2e30" stroke-width="2.4" /><path d="M870.3 280.5 L1466.7 411" fill="none" stroke="#2e2e30" stroke-width="2.4" /><polygon points="1466.7,400.8 1499,374.5 1499,384.5 1466.7,411.5" fill="#4c4c4e" stroke="#2a2a2a" stroke-width="1" stroke-linejoin="round" /><path d="M1468 408 L1498 382" fill="none" stroke="#8a8a8a" stroke-width="0.8" stroke-dasharray="1 3"/><path d="M870.3 270 L870.3 286" fill="none" stroke="#262626" stroke-width="1.4" /><path d="M870.300 270.200 C875 264 886 258 897 256.700 C908 254 925 252.500 933 253.300 C942 253.800 948 255 954 256 L1499 374 L1499 384 C1508 385 1520 388.500 1528 394 C1534 398.500 1537 404 1537.500 412" fill="none" stroke="#262626" stroke-width="1.500"/><linearGradient id="g1" gradientUnits="userSpaceOnUse" x1="1080" y1="385.800" x2="1077.050" y2="399.600"><stop offset="0" stop-color="#39393b"/><stop offset="0.07" stop-color="#808082"/><stop offset="0.3" stop-color="#a4a4a6"/><stop offset="0.46" stop-color="#d4d4d6"/><stop offset="0.58" stop-color="#ffffff"/><stop offset="0.92" stop-color="#ffffff"/><stop offset="1" stop-color="#5a5a5c"/></linearGradient><linearGradient id="g2" gradientUnits="userSpaceOnUse" x1="880" y1="547.500" x2="876.800" y2="562.200"><stop offset="0" stop-color="#39393b"/><stop offset="0.07" stop-color="#808082"/><stop offset="0.3" stop-color="#a4a4a6"/><stop offset="0.46" stop-color="#d4d4d6"/><stop offset="0.58" stop-color="#ffffff"/><stop offset="0.92" stop-color="#ffffff"/><stop offset="1" stop-color="#5a5a5c"/></linearGradient><linearGradient id="vg2" gradientUnits="userSpaceOnUse" x1="1027.500" y1="484.400" x2="1040.300" y2="501.200"><stop offset="0" stop-color="#2e2e30"/><stop offset="0.08" stop-color="#5a5a5c"/><stop offset="0.3" stop-color="#a0a0a2"/><stop offset="0.45" stop-color="#dedee0"/><stop offset="0.55" stop-color="#ffffff"/><stop offset="0.85" stop-color="#ffffff"/><stop offset="0.95" stop-color="#d0d0d2"/><stop offset="1" stop-color="#77777a"/></linearGradient><polygon points="860,337.95 1462.5,469.2 1461.7,478.3 1455.8,488.3 1453.3,476.7 1425,474.2 860,352.964" fill="url(#g1)" /><path d="M860 337.95 L1462.5 469.2" fill="none" stroke="#2c2c2e" stroke-width="1.5" /><path d="M860 352.964 L1425 474.2 L1453.3 476.7" fill="none" stroke="#3a3a3c" stroke-width="1.1" /><polygon points="1453.3,476.7 1455.8,488.3 1461.7,478.3 1462.5,469.2 1458,472" fill="#fbfbfb" stroke="#2c2c2e" stroke-width="0.9" stroke-linejoin="round" /><polygon points="700,507.684 1256.7,630.8 1255.8,640 1247.5,650.8 1245,638 1215,635.8 700,523.26" fill="url(#g2)" /><path d="M700 507.684 L1256.7 630.8" fill="none" stroke="#2c2c2e" stroke-width="1.5" /><path d="M700 523.26 L915.8 570" fill="none" stroke="#3a3a3c" stroke-width="1.1" /><path d="M950.8 577.5 L1215 635.8 L1245 638" fill="none" stroke="#3a3a3c" stroke-width="1.1" /><polygon points="1245,638 1247.5,650.8 1255.8,640 1256.7,630.8 1251,634" fill="#fbfbfb" stroke="#2c2c2e" stroke-width="0.9" stroke-linejoin="round" /><linearGradient id="bh" gradientUnits="userSpaceOnUse" x1="905" y1="577" x2="932" y2="584"><stop offset="0" stop-color="#3e3e40"/><stop offset="0.2" stop-color="#77777a"/><stop offset="0.45" stop-color="#c4c4c6"/><stop offset="0.65" stop-color="#fbfbfc"/><stop offset="1" stop-color="#ffffff"/></linearGradient><path d="M915.800 570 C912 571 909.500 572.500 909.200 573.300 C905 576 904.500 578 905.400 579.600 C905.500 582 906.500 583.500 908.300 584.200 C911 585.800 914 586 917.500 585.800 C921 585.600 924 585 926.700 584.200 C929 583.500 931 582.800 933.300 581.700 C936 580.500 938 579 940 577.500 L943.300 575.800 L950.800 577.500 L956.700 565 L930 558.750z" fill="url(#bh)"/><path d="M915.800 570 C912 571 909.500 572.500 909.200 573.300 C905 576 904.500 578 905.400 579.600 C905.500 582 906.500 583.500 908.300 584.200 C911 585.800 914 586 917.500 585.800 C921 585.600 924 585 926.700 584.200 C929 583.500 931 582.800 933.300 581.700 C936 580.500 938 579 940 577.500 L943.300 575.800" fill="none" stroke="#2c2c2e" stroke-width="1.200"/><path d="M915.800 570 C916.500 573 917.800 574.800 919.200 575.800 C921.500 578 924 579 926.700 579.200 C929 579.300 931 578.500 933.300 577.500 L943.300 575.800 L936 571z" fill="#fdfdfd"/><path d="M915.800 570 C916.500 573 917.800 574.800 919.200 575.800 C921.500 578 924 579 926.700 579.200 C929 579.300 931 578.500 933.300 577.500" fill="none" stroke="#2c2c2e" stroke-width="1"/><linearGradient id="sb" gradientUnits="userSpaceOnUse" x1="946" y1="570" x2="955" y2="576"><stop offset="0" stop-color="#8a8a8c"/><stop offset="1" stop-color="#d8d8da"/></linearGradient><path d="M956.700 565 C956.500 567 956 568.500 955 570 C954 572 953 573.200 951.700 574.200 C950 575.700 948.500 576.300 946.700 576.700 L943.300 575.800z" fill="url(#sb)" stroke="#2c2c2e" stroke-width="1"/><polygon points="1125,410 1139.6,399.2 1160,416.7 1151.7,416.25 956.7,565 943.3,575.8 933.3,577.5 930,558.75" fill="url(#vg2)" /><path d="M933.3 577.5 L930 558.75 L1125 410" fill="none" stroke="#2a2a2c" stroke-width="1.5" /><path d="M943.3 575.8 L956.7 565 L1151.7 416.25" fill="none" stroke="#4a4a4c" stroke-width="1.1" /><linearGradient id="th" gradientUnits="userSpaceOnUse" x1="1150" y1="392" x2="1172" y2="398"><stop offset="0" stop-color="#ffffff"/><stop offset="0.6" stop-color="#f2f2f4"/><stop offset="0.85" stop-color="#a9a9ab"/><stop offset="1" stop-color="#4a4a4c"/></linearGradient><linearGradient id="tw" gradientUnits="userSpaceOnUse" x1="1139" y1="400" x2="1152" y2="408"><stop offset="0" stop-color="#5a5a5c"/><stop offset="0.5" stop-color="#a4a4a6"/><stop offset="1" stop-color="#f4f4f6"/></linearGradient><path d="M1139.600 399.200 C1141 395 1146.700 391.500 1155 389.600 C1162 388.500 1170 390 1175 394.200 C1176.500 396 1175 398 1173.300 399.200 C1171 401 1169 402 1168.300 402.500 C1166.500 404 1165 407 1163.300 409.200 L1160 416.700 L1151.700 416.250 L1142 420 L1139.600 399.200z" fill="url(#th)" stroke="#2c2c2e" stroke-width="1.300"/><path d="M1139.600 399.200 C1141 395 1143.500 393 1146.700 392 C1147 398 1150 404 1155 407.500 C1158 409 1161 409.300 1163.300 409.200 L1160 416.700 C1155 417 1152 416.500 1150.500 417 L1142.100 420 C1141 414 1139.800 406 1139.600 399.200z" fill="url(#tw)" stroke="#2c2c2e" stroke-width="1"/><path d="M1125 410 C1127 415 1130 419 1134 420 C1138 420.500 1141 420 1142.100 420 L1139.600 399.200 L1125 409.800z" fill="#fbfbfc"/><path d="M1125 410 C1127 415 1130 419 1134 420 C1138 420.500 1141 420 1142.100 420 M1139.600 399.200 L1142.100 420" fill="none" stroke="#2c2c2e" stroke-width="1"/></svg>
<svg class="b" style="left:0px;top:0px;left:0" width="1920" height="1060" viewBox="0 0 1920 1060"><rect x="975" y="204" width="357" height="31" fill="#fff"/><path d="M975 235.500h357" stroke="#dcdcdc"/><rect x="987.500" y="208.500" width="142.500" height="21" fill="#fff" stroke="#444"/><path d="M1118.1 217.63 h6.8 l-3.4 3.91z" fill="#000"/><path d="M1143.500 208v23 M1156.500 208v23 M1137 216.500h26" stroke="#2aa0c0" stroke-width="1.200" fill="none"/><path d="M1143.500 217v14" stroke="#e8902f" stroke-width="1.200"/><path d="M1177.500 208v23 M1190.500 208v23 M1172 216.500h24" stroke="#2aa0c0" stroke-width="1.200" fill="none"/><path d="M1177.500 231v-8q0-6 7-6.500" stroke="#e8902f" stroke-width="1.200" fill="none"/><path d="M1208.500 208v16 M1217.500 208v10 M1204 215.500h18" stroke="#2aa0c0" stroke-width="1.200" fill="none"/><path d="M1208.500 216v8" stroke="#e8902f" stroke-width="1.200"/><circle cx="1216" cy="226.500" r="3.800" fill="none" stroke="#333" stroke-width="1.200"/><circle cx="1223" cy="220.500" r="3.800" fill="none" stroke="#333" stroke-width="1.200"/><circle cx="1243.500" cy="219" r="1" fill="#333"/><circle cx="1250" cy="219" r="1" fill="#333"/><circle cx="1256.500" cy="219" r="1" fill="#333"/><circle cx="1281.500" cy="218.500" r="8.500" fill="none" stroke="#333" stroke-width="1.200"/><path d="M1281.500 207v7 M1281.500 230v-7 M1270 218.500h7 M1293 218.500h-7" stroke="#333" stroke-width="1.100"/><path d="M1281.500 214.500l4 4-4 4-4-4z" fill="#e8802a"/><path d="M1298.9 217.07 h5.2 l-2.6 2.99z" fill="#000"/><path d="M1320.9 224.07 h5.2 l-2.6 2.99z" fill="#000"/><path d="M1316.500 207v25" stroke="#dcdcdc"/><path d="M1896.5 184 h-5.5 v4.6 h5.5 v4.6 h-5.5 v4.6 h5.5 v4.6 h-5.5" fill="none" stroke="#3b4046" stroke-width="1.1"/><path d="M1901.9 198 A5.6 5.6 0 0 1 1912.71 196.372 M1912.93 192.172 V196.372 H1908.62 M1913.1 199 A5.6 5.6 0 0 1 1902.29 200.628 M1902.07 204.828 V200.628 H1906.38" fill="none" stroke="#3b4046" stroke-width="1.2"/><circle cx="1902" cy="227" r="11.300" fill="none" stroke="#3b4046" stroke-width="1.100"/><path d="M1898 221.500v11l9-5.500z" fill="none" stroke="#3b4046" stroke-width="1.100" stroke-linejoin="round"/><circle cx="1902" cy="260" r="11.300" fill="none" stroke="#3b4046" stroke-width="1.100"/><path d="M1897 254.500v11l8-5.500z M1907 254.500v11" fill="none" stroke="#3b4046" stroke-width="1.100" stroke-linejoin="round"/><path d="M1896.5 280 h-5.5 v4.6 h5.5 v4.6 h-5.5 v4.6 h5.5 v4.6 h-5.5" fill="none" stroke="#3b4046" stroke-width="1.1"/><path d="M1899.5 298 Q1906 290.4 1912.5 298 Q1906 305.6 1899.5 298z" fill="none" stroke="#3b4046" stroke-width="1.1"/><circle cx="1906" cy="298" r="2.6" fill="#3b4046"/><path d="M1891 314.500h18 M1891 313v3 M1909 313v3" stroke="#e8902f" stroke-width="1" fill="none"/><rect x="1891.500" y="318.500" width="17" height="9" fill="#fff" stroke="#3b4046" stroke-width="1.100"/><path d="M1892 325l6-6 M1894 327.500l9-9 M1899 327.500l9-9 M1904 327.500l4.500-4.500" stroke="#3b4046" stroke-width="1.500"/><path d="M1899.5 331 Q1906 323.4 1912.5 331 Q1906 338.6 1899.5 331z" fill="#fff" stroke="#3b4046" stroke-width="1.1"/><circle cx="1906" cy="331" r="2.6" fill="#3b4046"/><rect x="1896.500" y="343.500" width="11" height="23" fill="#e58a3a" stroke="#9a6a3a" stroke-width=".8"/><path d="M1897 352l10-4 M1897 358l10-4 M1897 364l10-4" stroke="#f8cfa0" stroke-width="1.500"/><path d="M1890 377.500h24" stroke="#2a9a4a" stroke-width="1"/><path d="M1890 388q5-11 24-9" fill="none" stroke="#d8392b" stroke-width="1.100"/><path d="M1891 380q10 1 6 7t5 4" fill="none" stroke="#e8c02a" stroke-width="1.100"/><circle cx="1907" cy="393" r="6.500" fill="#2f3338"/><path d="M1907 393v-5.500a5.500 5.500 0 0 1 4.800 8.200z" fill="#e8242c"/><path d="M1907 393l4.800 2.700a5.500 5.500 0 0 1-9.600 0z" fill="#3ec84a"/><path d="M1907 393l-4.800 2.700a5.500 5.500 0 0 1 4.800-8.200z" fill="#4d9fc4"/><polygon points="1905.0,416.0 1907.0,421.2 1912.6,421.5 1908.2,425.1 1909.7,430.5 1905.0,427.4 1900.3,430.5 1901.8,425.1 1897.4,421.5 1903.0,421.2" fill="#f5e06a" stroke="#c9a83a" stroke-width=".7"/><path d="M1890 421h8 M1891 424h7 M1890 427h8" stroke="#6aa0d8" stroke-width="1"/><path d="M1898 418l6-5 5 2-4 5z" fill="#e8c8a8" stroke="#777" stroke-width=".6"/><path d="M1907 413l4-3 3 4-3 3z" fill="#3a4a9a"/><polygon points="1905.0,449.0 1907.0,454.2 1912.6,454.5 1908.2,458.1 1909.7,463.5 1905.0,460.4 1900.3,463.5 1901.8,458.1 1897.4,454.5 1903.0,454.2" fill="#f5e06a" stroke="#c9a83a" stroke-width=".7"/><path d="M1890 454h8 M1891 457h7 M1890 460h8" stroke="#6aa0d8" stroke-width="1"/><path d="M1898 451l6-5 5 2-4 5z" fill="#e8c8a8" stroke="#777" stroke-width=".6"/><path d="M1907 446l4-3 3 4-3 3z" fill="#3a4a9a"/><path d="M1892 493q8 1 9-8t10-10" fill="none" stroke="#222" stroke-width="1.500"/><circle cx="1892.500" cy="492.500" r="2" fill="#e02020"/><circle cx="1901.500" cy="483" r="2" fill="#e02020"/><circle cx="1911" cy="474.500" r="2" fill="#e02020"/><path d="M1889 504.500h27" stroke="#dcdcdc"/><path d="M398 1044l-3.500 3.500 3.500 3.500z M1895.500 1044l-3.500 3.500 3.500 3.500z" fill="#222"/></svg>
<div class="t " style="left:990.0px;top:213.0px;font-size:12.5px;color:#111;letter-spacing:-0.65px;">Tangent Curves</div>
<div class="b" style="left:0px;top:1055px;width:1920px;height:1px;background:#b8b8b8;"></div>
<div class="b" style="left:0px;top:1056px;width:1920px;height:21px;background:#fff;"></div>
<div class="t " style="left:3.0px;top:1061.0px;font-size:12px;color:#111;letter-spacing:-0.81px;font-weight:bold;">Select curve</div>
<div class="b" style="left:0px;top:1077px;width:1920px;height:3px;background:#176185;"></div>
<div class="b" style="left:175px;top:29px;width:587px;height:739.5px;background:#f3f2f3;box-shadow:0 1px 4px rgba(0,0,0,.45);"></div>
<div class="b" style="left:180.5px;top:29px;width:575.5px;height:734px;background:#f0eff0;"></div>
<div class="b" style="left:175px;top:4.5px;width:587px;height:24.5px;background:#04618b;"></div>
<svg class="b" style="left:0px;top:0px;left:0" width="770" height="775" viewBox="0 0 770 775"><circle cx="189" cy="17" r="4.300" fill="none" stroke="#fff" stroke-width="2.600"/><circle cx="189" cy="17" r="1.100" fill="#fff"/><path d="M193.6 18.9L194.8 19.4" stroke="#fff" stroke-width="2.800" stroke-linecap="round"/><path d="M190.9 21.6L191.4 22.8" stroke="#fff" stroke-width="2.800" stroke-linecap="round"/><path d="M187.1 21.6L186.6 22.8" stroke="#fff" stroke-width="2.800" stroke-linecap="round"/><path d="M184.4 18.9L183.2 19.4" stroke="#fff" stroke-width="2.800" stroke-linecap="round"/><path d="M184.4 15.1L183.2 14.6" stroke="#fff" stroke-width="2.800" stroke-linecap="round"/><path d="M187.1 12.4L186.6 11.2" stroke="#fff" stroke-width="2.800" stroke-linecap="round"/><path d="M190.9 12.4L191.4 11.2" stroke="#fff" stroke-width="2.800" stroke-linecap="round"/><path d="M193.6 15.1L194.8 14.6" stroke="#fff" stroke-width="2.800" stroke-linecap="round"/><path d="M741.500 12l9 9 M750.500 12l-9 9" stroke="#fff" stroke-width="2"/><g fill="#fafafa" stroke="#333" stroke-width="1.200" stroke-linejoin="round"><path d="M190.400 41.300v-3h4.200v3 M199.600 41.300v-3h4.200v3" fill="none"/><path d="M190 41.300h4.600v13.700h-9.200z M199.200 41.300h4.600l5 13.700h-9.600z"/><rect x="185.400" y="55" width="9.200" height="4.600"/><rect x="199.200" y="55" width="9.600" height="4.600"/><path d="M194.600 45.500h4.600 M194.600 50h4.600" fill="none"/></g><rect x="240.500" y="37.500" width="511" height="22" fill="#fff" stroke="#777"/><rect x="187.500" y="69.500" width="166" height="563" fill="#fff" stroke="#dcdcdc"/><rect x="208" y="70.500" width="144.500" height="18.500" fill="#cfe4ee"/><path d="M190 90.5h162" stroke="#ededee"/><path d="M190 110.5h162" stroke="#ededee"/><path d="M190 130.5h162" stroke="#ededee"/><path d="M190 150.5h162" stroke="#ededee"/><path d="M190 170.5h162" stroke="#ededee"/><path d="M190 190.5h162" stroke="#ededee"/><path d="M190 210.5h162" stroke="#ededee"/><path d="M190 230.5h162" stroke="#ededee"/><path d="M190 250.5h162" stroke="#ededee"/><path d="M190 270.5h162" stroke="#ededee"/><path d="M190 290.5h162" stroke="#ededee"/><path d="M190 310.5h162" stroke="#ededee"/><path d="M190 330.5h162" stroke="#ededee"/><path d="M190 350.5h162" stroke="#ededee"/><path d="M190 370.5h162" stroke="#ededee"/><path d="M190 390.5h162" stroke="#ededee"/><path d="M190 410.5h162" stroke="#ededee"/><path d="M190 430.5h162" stroke="#ededee"/><path d="M190 450.5h162" stroke="#ededee"/><path d="M190 470.5h162" stroke="#ededee"/><path d="M190 490.5h162" stroke="#ededee"/><path d="M190 510.5h162" stroke="#ededee"/><path d="M190 530.5h162" stroke="#ededee"/><path d="M190 550.5h162" stroke="#ededee"/><path d="M190 570.5h162" stroke="#ededee"/><path d="M190 590.5h162" stroke="#ededee"/><path d="M190 610.5h162" stroke="#ededee"/><rect x="188" y="614" width="165" height="17" fill="#efefef"/><path d="M206 622.500h117" stroke="#8a8a8a" stroke-width="2"/><path d="M199.500 80v180" stroke="#8a8a8a" stroke-width="1" stroke-dasharray="1 1.500" fill="none"/><path d="M200 80.5h7" stroke="#8a8a8a" stroke-width="1" stroke-dasharray="1 1.500" fill="none"/><path d="M200 100.5h7" stroke="#8a8a8a" stroke-width="1" stroke-dasharray="1 1.500" fill="none"/><path d="M200 120.5h7" stroke="#8a8a8a" stroke-width="1" stroke-dasharray="1 1.500" fill="none"/><path d="M200 140.5h7" stroke="#8a8a8a" stroke-width="1" stroke-dasharray="1 1.500" fill="none"/><path d="M200 160.5h7" stroke="#8a8a8a" stroke-width="1" stroke-dasharray="1 1.500" fill="none"/><path d="M200 200.5h7" stroke="#8a8a8a" stroke-width="1" stroke-dasharray="1 1.500" fill="none"/><path d="M200 220.5h7" stroke="#8a8a8a" stroke-width="1" stroke-dasharray="1 1.500" fill="none"/><path d="M200 240.5h7" stroke="#8a8a8a" stroke-width="1" stroke-dasharray="1 1.500" fill="none"/><path d="M200 260.5h7" stroke="#8a8a8a" stroke-width="1" stroke-dasharray="1 1.500" fill="none"/><path d="M204 180.500h3" stroke="#8a8a8a" stroke-width="1" stroke-dasharray="1 1.500" fill="none"/><rect x="195.500" y="176.500" width="8" height="8" fill="#fff" stroke="#bbb"/><path d="M197 180.500h5 M199.500 178v5" stroke="#222" stroke-width="1"/><rect x="364.500" y="69.500" width="383" height="565" fill="#ececed" stroke="#dcdcdc"/><rect x="365" y="70" width="382" height="102" fill="#fcfbfc"/><path d="M365 172.5h382" stroke="#d4d4d6"/><rect x="365" y="176" width="382" height="217" fill="#fcfbfc"/><path d="M365 393.5h382" stroke="#d4d4d6"/><rect x="365" y="397" width="382" height="139" fill="#fcfbfc"/><path d="M365 536.5h382" stroke="#d4d4d6"/><rect x="365" y="540" width="382" height="87" fill="#fcfbfc"/><path d="M365 627.5h382" stroke="#d4d4d6"/><path d="M372.7 78.5h8l-4 5z" fill="#15668a"/><path d="M372.7 187h8l-4 5z" fill="#15668a"/><path d="M372.7 407h8l-4 5z" fill="#15668a"/><path d="M372.7 550h8l-4 5z" fill="#15668a"/><rect x="553.5" y="100.5" width="116" height="21" fill="#fff" stroke="#5a5a5a" stroke-width="1"/><path d="M657 109.575 h7 l-3.5 4.025z" fill="#000"/><rect x="672.5" y="99.5" width="30" height="30" fill="#fff" stroke="#555" stroke-width="1"/><rect x="706.5" y="99.5" width="30" height="30" fill="#fff" stroke="#555" stroke-width="1"/><rect x="672.5" y="133.5" width="30" height="30" fill="#fff" stroke="#c4c4c6" stroke-width="1"/><rect x="706.5" y="133.5" width="30" height="30" fill="#fff" stroke="#555" stroke-width="1"/><defs><linearGradient id="og2" x1="0" x2="1"><stop offset="0" stop-color="#f7b055"/><stop offset="0.5" stop-color="#ea831f"/><stop offset="1" stop-color="#c86a14"/></linearGradient><linearGradient id="gg2" x1="0" x2="1"><stop offset="0" stop-color="#c6c6cb"/><stop offset="1" stop-color="#6c6c72"/></linearGradient></defs><rect x="688.500" y="103.500" width="8" height="12" fill="url(#gg2)" stroke="#444" stroke-width=".8"/><rect x="686.500" y="109" width="6.500" height="8.500" rx="1.500" fill="#f09a32"/><rect x="676.300" y="108.300" width="8.300" height="18" rx="1" fill="url(#og2)" stroke="#a8601a" stroke-width=".5"/><path d="M676.500 115l8-3.500 M676.500 120l8-3.500 M676.500 125l8-3.500" stroke="#fbd5a8" stroke-width="1.300"/><circle cx="693.500" cy="120.800" r="6" fill="#fff" stroke="#222" stroke-width="1.200"/><path d="M689.500 120.800h8 M693.500 116.800v8" stroke="#222" stroke-width="1.200"/><path d="M710.300 110.500q11.500-14 23 0q-4 0-6 4q-8 3-17-4z" fill="none" stroke="#3b4046" stroke-width="1.300"/><circle cx="721.500" cy="110.500" r="4.500" fill="#3b4046"/><path d="M719 124l8.500-8q-1-4 2.500-5.500l-.5 3 2 2 3-.5q-1 4-5 3l-8 8.500q-2 1.500-3.200 0q-1.300-1.200-.3-2.500z" fill="#fff" stroke="#3b4046" stroke-width="1.200" stroke-linejoin="round"/><circle cx="721" cy="124.300" r=".7" fill="#3b4046"/><path d="M677.500 145l7-6q2-1 3.500 0l10 11v5l-6 5-14.500-6z" fill="#dcd8d6"/><path d="M677.500 145l14.500 6 6-1 M692 151v9" stroke="#cfcac8" stroke-width=".8" fill="none"/><path d="M710 148.5 Q721.5 136.625 733 148.5 Q721.5 160.375 710 148.5z" fill="none" stroke="#3b4046" stroke-width="1.3"/><circle cx="721.5" cy="148.5" r="4.5" fill="#3b4046"/><rect x="604.5" y="208.5" width="133" height="21" fill="#fff" stroke="#5a5a5a" stroke-width="1"/><path d="M725 217.575 h7 l-3.5 4.025z" fill="#000"/><rect x="374.500" y="232.500" width="363" height="151" fill="#efeff0" stroke="#dadadc"/><path d="M380.5 240.5h8l-4 5z" fill="#15668a"/><rect x="383" y="260.500" width="346" height="31.500" fill="#ffd86a"/><path d="M391 269.500v13 M385.300 272.800l11.400 6.600 M396.700 272.800l-11.400 6.600" stroke="#e8202a" stroke-width="2"/><rect x="698.5" y="294.5" width="29" height="31" fill="#f4f4f5" stroke="#c9c9cb" stroke-width="1"/><path d="M703 319.500h20" stroke="#b5b5b8" stroke-width="1.400"/><circle cx="704" cy="319.500" r="2" fill="#b5b5b8"/><rect x="705.5" y="329.5" width="23" height="22" fill="#f4f4f5" stroke="#c9c9cb" stroke-width="1"/><circle cx="717" cy="340.700" r="7.300" fill="#c6c6c8"/><path d="M712 340.700h10 M717 335.700v10" stroke="#eee" stroke-width="1.100"/><circle cx="717" cy="340.700" r="7.300" fill="none" stroke="#a9a9ab" stroke-width=".8"/><rect x="383.500" y="354.500" width="345" height="21" fill="#fff" stroke="#d2d2d4"/><path d="M392.500 361l4.500 4-4.500 4z" fill="#15668a"/><rect x="604.5" y="428.5" width="133" height="23" fill="#fff" stroke="#5a5a5a" stroke-width="1"/><path d="M725 438.575 h7 l-3.5 4.025z" fill="#000"/><rect x="604.5" y="456.5" width="133" height="21" fill="#fff" stroke="#5a5a5a" stroke-width="1"/><path d="M725 465.575 h7 l-3.5 4.025z" fill="#000"/><rect x="604.5" y="480.5" width="133" height="21" fill="#fff" stroke="#5a5a5a" stroke-width="1"/><path d="M725 489.575 h7 l-3.5 4.025z" fill="#000"/><rect x="604.5" y="506.5" width="133" height="21" fill="#fff" stroke="#5a5a5a" stroke-width="1"/><path d="M725 515.575 h7 l-3.5 4.025z" fill="#000"/><ellipse cx="616" cy="442.5" rx="6.500" ry="2" fill="#bfe6f4" stroke="#2a9ec8" stroke-width=".9"/><ellipse cx="616" cy="440.8" rx="6.500" ry="2" fill="#bfe6f4" stroke="#2a9ec8" stroke-width=".9"/><ellipse cx="616" cy="439.1" rx="6.500" ry="2" fill="#bfe6f4" stroke="#2a9ec8" stroke-width=".9"/><ellipse cx="616" cy="437.4" rx="6.500" ry="2" fill="#bfe6f4" stroke="#2a9ec8" stroke-width=".9"/><rect x="604.5" y="570.5" width="133" height="21" fill="#fff" stroke="#5a5a5a" stroke-width="1"/><path d="M725 579.575 h7 l-3.5 4.025z" fill="#000"/><rect x="591.500" y="596" width="81" height="22" fill="#fff" stroke="#4a4a4a"/><rect x="676.5" y="596.5" width="61" height="21" fill="#fff" stroke="#5a5a5a" stroke-width="1"/><path d="M725 605.575 h7 l-3.5 4.025z" fill="#000"/><rect x="185" y="635" width="567" height="70" fill="#fff"/><path d="M185 705.500h567" stroke="#dcdcdd"/><path d="M192 644.5h8l-4 5z" fill="#15668a"/><rect x="401.5" y="665.5" width="31" height="31" fill="#fff" stroke="#555" stroke-width="1"/><rect x="435.5" y="665.5" width="31" height="31" fill="#fff" stroke="#c9c9cb" stroke-width="1"/><rect x="469.5" y="665.5" width="31" height="31" fill="#fff" stroke="#c9c9cb" stroke-width="1"/><rect x="503.5" y="665.5" width="31" height="31" fill="#fff" stroke="#c9c9cb" stroke-width="1"/><rect x="711.5" y="665.5" width="31" height="31" fill="#fff" stroke="#555" stroke-width="1"/><path d="M412.8 669.5 h-7.6 v5.05 h7.6 v5.05 h-7.6 v5.05 h7.6 v5.05 h-7.6" fill="none" stroke="#3b4046" stroke-width="1.3"/><path d="M416.3 684.7 A6 6 0 0 1 427.88 682.92 M428.12 678.42 V682.92 H423.5 M428.3 685.7 A6 6 0 0 1 416.72 687.48 M416.48 691.98 V687.48 H421.1" fill="none" stroke="#3b4046" stroke-width="1.3"/><path d="M446.8 669.5 h-7.6 v5.05 h7.6 v5.05 h-7.6 v5.05 h7.6 v5.05 h-7.6" fill="none" stroke="#c4c4c6" stroke-width="1.2"/><path d="M462.300 685.500a5.500 5.500 0 1 1-5.500-4 M457 681.500q3-.5 4-3 M458 678.200l3.200 .3-.3 3.200" fill="none" stroke="#c4c4c6" stroke-width="1.200"/><path d="M475 678l5-3v-4h6v4l6 3v10l-8 5-9-4z" fill="#bdbdc0"/><circle cx="490" cy="689" r="5" fill="#c9c9cb" stroke="#aaa" stroke-width=".6"/><path d="M487.500 689l2 2 3.500-4" stroke="#e8e8e8" stroke-width="1.100" fill="none"/><path d="M518 670.500h-8.500v18h9 M518 670.500l5 5v3 M518 670.500v5h5" fill="none" stroke="#c4c4c6" stroke-width="1.100"/><path d="M516 673h-4.500v4.500h4.500v4.500h-4.500v4.500h4.500" fill="none" stroke="#c9c9cb" stroke-width="1"/><path d="M527 681.500v-2h-7v12h7v-2 M522 685.500h9 M528 682.500l3 3-3 3" fill="none" stroke="#c4c4c6" stroke-width="1.100"/><path d="M722.8 669.5 h-7.6 v5.05 h7.6 v5.05 h-7.6 v5.05 h7.6 v5.05 h-7.6" fill="none" stroke="#3b4046" stroke-width="1.3"/><circle cx="731.500" cy="677" r="4" fill="none" stroke="#e8902f" stroke-width="1.200"/><path d="M725 677h13 M731.500 670.500v13" stroke="#3b4046" stroke-width="1"/><path d="M463.500 722h9l-4.500-5z" fill="#111"/><path d="M180.500 726.500h575.500" stroke="#d9d9da"/><rect x="609" y="735.500" width="65.500" height="22" fill="#10608a"/><rect x="680.500" y="736" width="65" height="21" fill="#fff" stroke="#15668a"/></svg>
<div class="t " style="left:204.0px;top:10.0px;font-size:13px;color:#fff;letter-spacing:-0.03px;">Fixed Axis Guiding Curves - [FIXED_AXIS_GUIDING_CURVES]</div>
<div class="t " style="left:719.5px;top:10.0px;font-size:14px;color:#fff;font-weight:bold;">?</div>
<div class="t " style="left:211.0px;top:42.0px;font-size:13px;color:#222;letter-spacing:-0.70px;">Find</div>
<div class="t " style="left:211.0px;top:73.0px;font-size:12.5px;color:#1c1c1c;letter-spacing:-0.02px;">Main</div>
<div class="t " style="left:211.0px;top:93.0px;font-size:12.5px;color:#1c1c1c;letter-spacing:-0.36px;">Geometry</div>
<div class="t " style="left:211.0px;top:113.0px;font-size:12.5px;color:#1c1c1c;letter-spacing:-0.15px;">Axis &amp; Avoidance</div>
<div class="t " style="left:211.0px;top:133.0px;font-size:12.5px;color:#1c1c1c;letter-spacing:-0.67px;">Feeds &amp; Speeds</div>
<div class="t " style="left:211.0px;top:153.0px;font-size:12.5px;color:#1c1c1c;letter-spacing:-0.44px;">Strategy</div>
<div class="t " style="left:211.0px;top:173.0px;font-size:12.5px;color:#1c1c1c;letter-spacing:-0.13px;">Non Cutting Moves</div>
<div class="t " style="left:211.0px;top:193.0px;font-size:12.5px;color:#1c1c1c;letter-spacing:-0.16px;">Method &amp; Tolerance</div>
<div class="t " style="left:211.0px;top:213.0px;font-size:12.5px;color:#1c1c1c;letter-spacing:-0.28px;">Collision Check</div>
<div class="t " style="left:211.0px;top:233.0px;font-size:12.5px;color:#1c1c1c;letter-spacing:-0.20px;">Tool, Prg &amp; Machine Contr</div>
<div class="t " style="left:211.0px;top:253.0px;font-size:12.5px;color:#1c1c1c;letter-spacing:-0.23px;">Options</div>
<div class="t " style="left:389.4px;top:74.0px;font-size:14px;color:#1d6d8e;letter-spacing:0.04px;">Main</div>
<div class="t " style="left:374.0px;top:104.0px;font-size:12.5px;color:#1c1c1c;letter-spacing:-0.23px;">Tool</div>
<div class="t " style="left:374.0px;top:144.0px;font-size:12.5px;color:#1c1c1c;letter-spacing:-0.38px;">Specify Cut Area</div>
<div class="t " style="left:558.0px;top:104.0px;font-size:12px;color:#1c1c1c;letter-spacing:-0.76px;">FRAISA_H7490391</div>
<div class="t " style="left:389.4px;top:182.0px;font-size:14px;color:#1d6d8e;letter-spacing:-0.07px;">Drive Geometry</div>
<div class="t " style="left:374.0px;top:212.0px;font-size:12.5px;color:#1c1c1c;letter-spacing:-0.43px;">Pattern Type</div>
<div class="t " style="left:608.0px;top:212.0px;font-size:12.5px;color:#1c1c1c;letter-spacing:0.05px;">Morphing</div>
<div class="t " style="left:396.0px;top:236.0px;font-size:12.5px;color:#1d6d8e;letter-spacing:-0.53px;">Guide Curves</div>
<div class="t " style="left:403.0px;top:269.0px;font-size:12.5px;color:#1c1c1c;letter-spacing:-0.55px;">Select Curve (0)</div>
<div class="t " style="left:383.0px;top:303.0px;font-size:12.5px;color:#b9b9bb;letter-spacing:-0.33px;">Specify Origin Curve</div>
<div class="t " style="left:383.0px;top:334.0px;font-size:12.5px;color:#b9b9bb;letter-spacing:-0.45px;">Add New Set</div>
<div class="t " style="left:405.0px;top:358.0px;font-size:12.5px;color:#1d6d8e;letter-spacing:-0.36px;">List</div>
<div class="t " style="left:389.4px;top:402.0px;font-size:14px;color:#1d6d8e;letter-spacing:-0.21px;">Path Settings</div>
<div class="t " style="left:374.0px;top:433.0px;font-size:12.5px;color:#1c1c1c;letter-spacing:-0.34px;">Cut Pattern</div>
<div class="t " style="left:374.0px;top:460.0px;font-size:12.5px;color:#1c1c1c;letter-spacing:-0.21px;">Cut Direction</div>
<div class="t " style="left:374.0px;top:485.0px;font-size:12.5px;color:#1c1c1c;letter-spacing:-0.32px;">Cut Order</div>
<div class="t " style="left:374.0px;top:510.0px;font-size:12.5px;color:#1c1c1c;letter-spacing:-0.75px;">Finish Passes</div>
<div class="t " style="left:628.0px;top:432.0px;font-size:12.5px;color:#1c1c1c;letter-spacing:-0.29px;">Helical</div>
<div class="t " style="left:608.0px;top:460.0px;font-size:12.5px;color:#1c1c1c;letter-spacing:-0.25px;">Along Guide</div>
<div class="t " style="left:608.0px;top:485.0px;font-size:12.5px;color:#1c1c1c;letter-spacing:-0.53px;">From Guide 1</div>
<div class="t " style="left:608.0px;top:510.0px;font-size:12.5px;color:#1c1c1c;letter-spacing:-0.18px;">Both</div>
<div class="t " style="left:389.4px;top:546.0px;font-size:14px;color:#1d6d8e;letter-spacing:-0.25px;">Stepover</div>
<div class="t " style="left:374.0px;top:575.0px;font-size:12.5px;color:#1c1c1c;letter-spacing:-0.50px;">Stepover</div>
<div class="t " style="left:374.0px;top:600.0px;font-size:12.5px;color:#1c1c1c;letter-spacing:-0.20px;">Maximum Distance</div>
<div class="t " style="left:608.0px;top:575.0px;font-size:12.5px;color:#1c1c1c;letter-spacing:-0.25px;">Constant</div>
<div class="t " style="left:607.0px;top:600.0px;font-size:12.5px;color:#3a3a3a;letter-spacing:1.21px;font-family:'Liberation Mono',monospace;">10.0000</div>
<div class="t " style="left:680.0px;top:600.0px;font-size:12.5px;color:#1c1c1c;letter-spacing:-0.33px;">%Tool l</div>
<div class="t " style="left:209.0px;top:640.0px;font-size:14px;color:#1d6d8e;letter-spacing:-0.13px;">Actions</div>
<div class="t " style="left:633.2px;top:740.0px;font-size:13px;color:#fff;letter-spacing:-0.89px;">OK</div>
<div class="t " style="left:695.0px;top:740.0px;font-size:13px;color:#15668a;letter-spacing:-0.74px;">Cancel</div>
<div class="b" style="left:603.5px;top:229.5px;width:134px;height:87px;background:#fff;border:1px solid #6a6a6a;box-sizing:border-box;"></div>
<div class="b" style="left:604.5px;top:282.5px;width:132px;height:17px;background:#e0ecf5;"></div>
<div class="t " style="left:606.0px;top:233.0px;font-size:12.5px;color:#1c1c1c;letter-spacing:-0.24px;">Constant Offset</div>
<div class="t " style="left:606.0px;top:250.0px;font-size:12.5px;color:#1c1c1c;letter-spacing:0.11px;">Morphing</div>
<div class="t " style="left:606.0px;top:267.0px;font-size:12.5px;color:#1c1c1c;letter-spacing:-0.43px;">Racetrack around Guide</div>
<div class="t " style="left:606.0px;top:284.0px;font-size:12.5px;color:#1c1c1c;letter-spacing:-0.27px;">Morph around Mid Pass</div>
<div class="t " style="left:606.0px;top:301.0px;font-size:12.5px;color:#1c1c1c;letter-spacing:-0.34px;">Offset around Mid Pass</div>
<div class="b" style="left:738.5px;top:282px;width:263.5px;height:216px;background:#fff;box-shadow:1.5px 1.5px 3px rgba(0,0,0,.6);"></div>
<div class="b" style="left:745px;top:290px;width:250px;height:200px;border:1px solid #8a8a8a;box-sizing:border-box;background:linear-gradient(#ffffff 0%,#f4f3f3 40%,#d9d6d6 100%);"></div>
<svg class="b" style="left:730px;top:270px" width="300" height="240" viewBox="0 0 1350 1080"><polygon points="120,470 525,815 525,900 125,670" fill="#d8b22a"/><polygon points="525,815 1140,455 1140,545 525,900" fill="#e8c638"/><polygon points="120,470 735,180 1140,455 525,815" fill="#0c8282"/><path d="M525 815v85" stroke="#b8961e" stroke-width="3"/><path d="M245 480 L700 262 Q735 250 765 270 L1000 425 Q1025 450 985 480 L545 745 Q520 755 495 735 L255 520 Q230 495 245 480z" fill="none" stroke="#1ef4f4" stroke-width="12" stroke-linejoin="round"/><path d="M360 490 L690 335 Q730 320 765 340 L880 420 Q905 445 865 475 L565 660 Q535 675 505 650 L375 535 Q345 505 360 490z" fill="none" stroke="#1ef4f4" stroke-width="12" stroke-linejoin="round"/><path d="M470 505 Q600 440 690 400 Q740 385 775 410 Q805 440 770 470 L585 590 Q545 610 510 585 Q440 530 470 505z" fill="none" stroke="#1ef4f4" stroke-width="12" stroke-linejoin="round"/><path d="M120 470 L735 180 L1140 455 L525 815z" fill="none" stroke="#f8f020" stroke-width="17" stroke-dasharray="7 41" stroke-linecap="round"/><path d="M525 548 L740 440" stroke="#f8f020" stroke-width="15" stroke-dasharray="10 42" stroke-linecap="round"/></svg>
<svg class="b" style="left:624.5px;top:294px;" width="27.3" height="42" viewBox="0 0 26 40"><path d="M1.500 1.500 L1.500 29 L8 23 L13.500 36 L18.500 34 L13 21.500 L22 21.500z" fill="#fff" stroke="#000" stroke-width="1.800" stroke-linejoin="miter"/></svg>
</body></html>
